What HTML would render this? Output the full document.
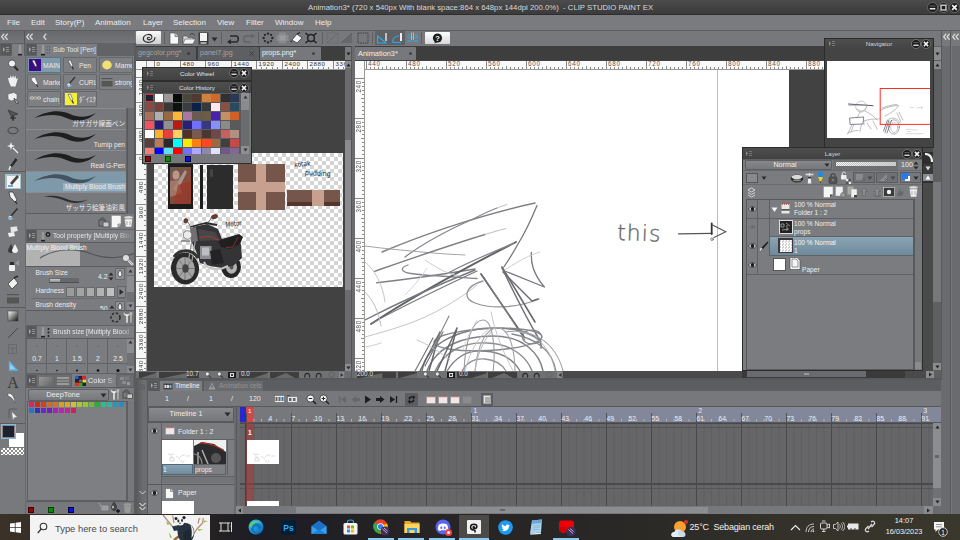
<!DOCTYPE html>
<html><head><meta charset="utf-8"><title>CLIP STUDIO PAINT EX</title>
<style>
html,body{margin:0;padding:0;background:#6f7073;}
body{width:960px;height:540px;overflow:hidden;position:relative;font-family:"Liberation Sans","Noto Sans CJK JP",sans-serif;}
#r{position:absolute;left:0;top:0;width:960px;height:540px;overflow:hidden;}
#r div,#r svg{position:absolute;}
#r svg{overflow:hidden;}
</style></head><body><div id="r">
<div style="left:0px;top:0px;width:960px;height:540px;background:#6f7073;"></div>
<div style="left:0px;top:0px;width:960px;height:15px;background:linear-gradient(#4c4c4c,#444 40%,#3a3a3a);"></div>
<div style="left:0px;top:14px;width:960px;height:1px;background:#2e2e2e;"></div>
<div style="left:308px;top:2px;font-size:7.76px;color:#d8d8d8;white-space:nowrap;line-height:11px;">Animation3* (720 x 540px With blank space:864 x 648px 144dpi 200.0%)&nbsp; - CLIP STUDIO PAINT EX</div>
<svg style="left:926.5px;top:2px;" width="11" height="11" viewBox="0 0 11 11"><circle cx="5.5" cy="5.5" r="5" fill="#1e1e1e" stroke="#8a8a8a" stroke-width="0.6"/><rect x="2.7" y="6" width="5.6" height="1.5" fill="#e8e8e8"/><rect x="2.7" y="3.6" width="5.6" height="0.8" fill="#777"/></svg>
<svg style="left:937.5px;top:2px;" width="11" height="11" viewBox="0 0 11 11"><circle cx="5.5" cy="5.5" r="5" fill="#1e1e1e" stroke="#8a8a8a" stroke-width="0.6"/><rect x="3" y="3.2" width="5" height="4.8" fill="none" stroke="#e8e8e8" stroke-width="1.2"/></svg>
<svg style="left:948.5px;top:2px;" width="11" height="11" viewBox="0 0 11 11"><circle cx="5.5" cy="5.5" r="5" fill="#1e1e1e" stroke="#8a8a8a" stroke-width="0.6"/><path d="M3.2 3.200 L7.800 7.800 M7.800 3.200 L3.200 7.800" stroke="#f0f0f0" stroke-width="1.700"/></svg>
<div style="left:0px;top:15px;width:960px;height:15px;background:#7a7b7e;"></div>
<div style="left:7px;top:17px;font-size:8px;color:#ececec;white-space:nowrap;line-height:11px;">File</div>
<div style="left:31px;top:17px;font-size:8px;color:#ececec;white-space:nowrap;line-height:11px;">Edit</div>
<div style="left:55px;top:17px;font-size:8px;color:#ececec;white-space:nowrap;line-height:11px;">Story(P)</div>
<div style="left:95px;top:17px;font-size:8px;color:#ececec;white-space:nowrap;line-height:11px;">Animation</div>
<div style="left:143px;top:17px;font-size:8px;color:#ececec;white-space:nowrap;line-height:11px;">Layer</div>
<div style="left:173px;top:17px;font-size:8px;color:#ececec;white-space:nowrap;line-height:11px;">Selection</div>
<div style="left:217px;top:17px;font-size:8px;color:#ececec;white-space:nowrap;line-height:11px;">View</div>
<div style="left:246px;top:17px;font-size:8px;color:#ececec;white-space:nowrap;line-height:11px;">Filter</div>
<div style="left:275px;top:17px;font-size:8px;color:#ececec;white-space:nowrap;line-height:11px;">Window</div>
<div style="left:315px;top:17px;font-size:8px;color:#ececec;white-space:nowrap;line-height:11px;">Help</div>
<div style="left:0px;top:30px;width:960px;height:16px;background:#77787b;"></div>
<div style="left:0px;top:30px;width:960px;height:1px;background:#5c5d5f;"></div>
<div style="left:0px;top:31px;width:25px;height:12px;background:linear-gradient(#68696c,#747578);"></div>
<div style="left:25px;top:31px;width:110px;height:12px;background:linear-gradient(#68696c,#747578);"></div>
<svg style="left:1px;top:33px;" width="9" height="8" viewBox="0 0 9 8"><path d="M3.2 0.700 L0.6 3.700 L3.2 6.700 M6.6 0.700 L4.0 3.700 L6.6 6.700" fill="none" stroke="#d6d6d6" stroke-width="1.300"/></svg>
<svg style="left:26px;top:33px;" width="9" height="8" viewBox="0 0 9 8"><path d="M3.2 0.700 L0.6 3.700 L3.2 6.700 M6.6 0.700 L4.0 3.700 L6.6 6.700" fill="none" stroke="#d6d6d6" stroke-width="1.300"/></svg>
<svg style="left:43px;top:33px;" width="9" height="8" viewBox="0 0 9 8"><path d="M3.2 0.700 L0.6 3.700 L3.2 6.700" fill="none" stroke="#d6d6d6" stroke-width="1.300"/></svg>
<div style="left:24px;top:31px;width:1px;height:12px;background:#555;"></div>
<div style="left:0px;top:43px;width:25px;height:471px;background:#78797c;"></div>
<div style="left:0px;top:43px;width:25px;height:13px;background:#5e5f61;"></div>
<div style="left:1px;top:44px;width:10px;height:11px;background:#57585a;"></div>
<div style="left:12px;top:44px;width:12px;height:12px;background:#7d7e81;"></div>
<svg style="left:3px;top:47px;" width="6" height="6" viewBox="0 0 6 6"><path d="M0 0 L2 2.500 L0 5 Z" fill="#aaa"/><path d="M3 0.500 H6 M3 2.500 H6 M3 4.500 H6" stroke="#aaa" stroke-width="0.700"/></svg>
<svg style="left:17px;top:45px;" width="6" height="11" viewBox="0 0 6 11"><path d="M2 0 L4 0 L4.500 8 L1.500 8 Z" fill="#999"/><rect x="1" y="9" width="4" height="1.500" fill="#222"/></svg>
<svg style="left:5px;top:57px;" width="16" height="16" viewBox="0 0 16 16"><circle cx="7" cy="6.5" r="3.6" fill="#f0f0f0" stroke="#555" stroke-width="1"/><path d="M9.5 9.5 L13 13.5" stroke="#2c2c2c" stroke-width="2"/></svg>
<svg style="left:5px;top:73px;" width="16" height="16" viewBox="0 0 16 16"><path d="M4 9 L3 5 L5 5 L5.5 2.5 L7 5 L8 2 L9 5 L10.5 2.5 L11 6 L13 5 L11.5 10 L10.5 13.5 L6 13.5 Z" fill="#f0f0f0"/></svg>
<svg style="left:5px;top:90px;" width="16" height="16" viewBox="0 0 16 16"><path d="M3 4 L9 2.5 L12 4.5 L12 9 L6 11 L3 9 Z" fill="#f0f0f0" stroke="#666" stroke-width="0.6"/><path d="M9 8 L13.5 13 L11 13 Z" fill="#f0f0f0" stroke="#2c2c2c" stroke-width="0.7"/></svg>
<svg style="left:5px;top:107px;" width="16" height="16" viewBox="0 0 16 16"><path d="M3 3 L8 13 L9 8 L13 7 Z" fill="#555" stroke="#2c2c2c" stroke-width="0.6"/><path d="M8 8 L8 14 M5 11 L11 11" stroke="#2c2c2c" stroke-width="1"/></svg>
<svg style="left:5px;top:123px;" width="16" height="16" viewBox="0 0 16 16"><ellipse cx="8" cy="7.5" rx="5" ry="3.2" fill="none" stroke="#4a4a4a" stroke-width="1.1"/></svg>
<svg style="left:5px;top:140px;" width="16" height="16" viewBox="0 0 16 16"><path d="M6 2 L7 5 L10 6 L7 7 L6 10 L5 7 L2 6 L5 5 Z" fill="#f0f0f0"/><path d="M8 8 L13 13" stroke="#f0f0f0" stroke-width="1.3"/></svg>
<svg style="left:5px;top:156px;" width="16" height="16" viewBox="0 0 16 16"><path d="M10.5 2 L12.5 4 L7 11 L5 10 Z" fill="#2c2c2c"/><path d="M5.5 10 L4 14" stroke="#f0f0f0" stroke-width="1.4"/></svg>
<div style="left:0px;top:171px;width:25px;height:1px;background:#5a5b5d;"></div>
<div style="left:5px;top:174px;width:16px;height:15px;background:#a9c2d0;"></div>
<div style="left:6.5px;top:175.5px;width:13px;height:12px;background:#f4f4f4;"></div>
<svg style="left:5px;top:174px;" width="16" height="16" viewBox="0 0 16 16"><path d="M12 1 L14 3 L7 11 L5 9 Z" fill="#444"/><path d="M3 12 L8 12" stroke="#4a90c8" stroke-width="1.5"/></svg>
<svg style="left:5px;top:190px;" width="16" height="16" viewBox="0 0 16 16"><path d="M4 2 L8 2 L12 10 L10 12 L5 7 Z" fill="#f0f0f0" stroke="#2c2c2c" stroke-width="0.7"/><path d="M10 11 L12 14" stroke="#2c2c2c" stroke-width="1.3"/></svg>
<svg style="left:5px;top:207px;" width="16" height="16" viewBox="0 0 16 16"><path d="M12.5 1.5 L5 10" stroke="#2c2c2c" stroke-width="1.4"/><path d="M3 10 L9 12 L4 13 Z" fill="#8cc4e8"/><path d="M3 10 L6 8.5 L7 10.5 Z" fill="#f0f0f0"/></svg>
<svg style="left:5px;top:224px;" width="16" height="16" viewBox="0 0 16 16"><path d="M5 3 L12 2 L13 7 L6 9 Z" fill="#e8e8e8" stroke="#777" stroke-width="0.5"/><path d="M3 9 L9 8 L10 12 L4 13 Z" fill="#f0f0f0"/></svg>
<svg style="left:5px;top:240px;" width="16" height="16" viewBox="0 0 16 16"><path d="M6 4 L9 10 A3 3 0 1 1 3 10 Z" fill="#3a3a3a"/><path d="M10 4 L13 10 A3 3 0 1 1 7 10 Z" fill="#f0f0f0"/></svg>
<svg style="left:5px;top:257px;" width="16" height="16" viewBox="0 0 16 16"><rect x="4" y="8" width="6" height="6" rx="1" fill="#f0f0f0"/><rect x="5" y="5" width="4" height="3" fill="#2c2c2c"/><path d="M10 6 L14 3 L14 9 Z" fill="#999"/></svg>
<svg style="left:5px;top:275px;" width="16" height="16" viewBox="0 0 16 16"><path d="M3 9 L9 3 L13 8 L7 14 Z" fill="#f0f0f0" stroke="#2c2c2c" stroke-width="0.7"/><path d="M9 3 L13 1" stroke="#2c2c2c" stroke-width="1.4"/></svg>
<svg style="left:5px;top:291px;" width="16" height="16" viewBox="0 0 16 16"><rect x="2" y="3" width="12" height="1.2" fill="#555"/><rect x="2" y="6.5" width="12" height="6" fill="#555"/></svg>
<div style="left:0px;top:307px;width:25px;height:1px;background:#5a5b5d;"></div>
<svg style="left:5px;top:308px;" width="16" height="16" viewBox="0 0 16 16"><defs><linearGradient id="gt" x1="0" y1="0" x2="1" y2="1"><stop offset="0" stop-color="#fff"/><stop offset="1" stop-color="#111"/></linearGradient></defs><rect x="3" y="3" width="10" height="10" fill="url(#gt)" stroke="#444" stroke-width="0.6"/></svg>
<svg style="left:5px;top:325px;" width="16" height="16" viewBox="0 0 16 16"><path d="M3 13 L13 3" stroke="#444" stroke-width="1"/></svg>
<svg style="left:5px;top:341px;" width="16" height="16" viewBox="0 0 16 16"><rect x="3.5" y="3.5" width="8" height="9" fill="none" stroke="#696a6c" stroke-width="1"/><path d="M3.5 7 H11.5 M7.5 7 V12.5" stroke="#696a6c" stroke-width="1"/></svg>
<svg style="left:5px;top:358px;" width="16" height="16" viewBox="0 0 16 16"><path d="M4.500 4 L4.500 12 L12 12 Z" fill="#9ad0f0" stroke="#5ab4e6" stroke-width="1.300"/></svg>
<svg style="left:5px;top:374px;" width="16" height="16" viewBox="0 0 16 16"><text x="8" y="14" font-size="16" font-family="Liberation Serif, serif" fill="#3a3a3a" text-anchor="middle">A</text></svg>
<svg style="left:5px;top:390px;" width="16" height="16" viewBox="0 0 16 16"><path d="M3 3 Q9 3 10 13 Q7 7 3 6 Z" fill="#f0f0f0" stroke="#444" stroke-width="0.5"/></svg>
<svg style="left:5px;top:407px;" width="16" height="16" viewBox="0 0 16 16"><path d="M4 2 L12 2 M4 2 L4 11" stroke="#555" stroke-width="0.8"/><path d="M7 5 L12 10 L9 10.5 L8 13 Z" fill="#f0f0f0"/></svg>
<div style="left:0px;top:423px;width:25px;height:1px;background:#5a5b5d;"></div>
<div style="left:9px;top:433px;width:15px;height:14px;background:#ffffff;"></div>
<div style="left:1px;top:424px;width:15px;height:15px;background:#7fc0e4;"></div>
<div style="left:2px;top:425px;width:13px;height:13px;background:#888;"></div>
<div style="left:3px;top:426px;width:11px;height:11px;background:#1d2230;"></div>
<div style="left:1px;top:448px;width:23px;height:7px;background:repeating-conic-gradient(#fff 0% 25%, #8a8a8a 0% 50%) 0 0/4px 4px;"></div>
<div style="left:25px;top:43px;width:110px;height:471px;background:#6a6b6e;"></div>
<div style="left:25px;top:43px;width:1px;height:471px;background:#67686b;"></div>
<div style="left:134px;top:43px;width:2px;height:471px;background:#5a5b5d;"></div>
<div style="left:26px;top:43px;width:108px;height:13px;background:#626366;"></div>
<div style="left:27px;top:44px;width:9px;height:11px;background:#57585a;"></div>
<div style="left:37px;top:44px;width:60px;height:12px;background:#7d7e81;"></div>
<div style="left:53px;top:45px;font-size:6.6px;color:#e4e4e4;white-space:nowrap;line-height:10px;">Sub Tool [Pen]</div>
<svg style="left:39px;top:45px;" width="12" height="11" viewBox="0 0 12 11"><path d="M3 0 L5 0 L5.5 8 L2.5 8 Z" fill="#999"/><rect x="2" y="9" width="4" height="1.5" fill="#222"/><path d="M8 1 V10 M10.5 1 V10" stroke="#555" stroke-width="0.8" stroke-dasharray="1.5 1.5"/></svg>
<svg style="left:29px;top:47px;" width="6" height="6" viewBox="0 0 6 6"><path d="M0 0 L2 2.5 L0 5 Z" fill="#aaa"/><path d="M3 0.5 H6 M3 2.5 H6 M3 4.5 H6" stroke="#aaa" stroke-width="0.7"/></svg>
<div style="left:26px;top:56px;width:108px;height:52px;background:#7b7c7f;"></div>
<div style="left:27px;top:57px;width:34px;height:16px;background:#7f9aab;border:1px solid #5d7484;box-sizing:border-box;border-radius:1px;overflow:hidden;"><svg style="left:1px;top:1px" width="12" height="12" viewBox="0 0 12 12"><rect x="0" y="0" width="12" height="12" fill="#3a0a8c"/><path d="M3 1.5 L5.5 1 L8 7 L6.5 8 Z" fill="#f4f4f4" stroke="#333" stroke-width="0.5"/><path d="M7 7.5 L8.5 10.5" stroke="#333" stroke-width="1.2"/></svg><div style="left:15px;top:3px;font-size:6.8px;line-height:10px;color:#e8e8e8;white-space:nowrap;">MAIN</div></div>
<div style="left:63px;top:57px;width:34px;height:16px;background:#7e7f82;border:1px solid #67686b;box-sizing:border-box;border-radius:1px;overflow:hidden;"><svg style="left:1px;top:1px" width="12" height="12" viewBox="0 0 12 12"><path d="M3 1.5 L5.5 1 L8 7 L6.5 8 Z" fill="#f4f4f4" stroke="#333" stroke-width="0.5"/><path d="M7 7.5 L8.5 10.5" stroke="#333" stroke-width="1.2"/></svg><div style="left:15px;top:3px;font-size:6.8px;line-height:10px;color:#e8e8e8;white-space:nowrap;">Pen</div></div>
<div style="left:99px;top:57px;width:34px;height:16px;background:#7e7f82;border:1px solid #67686b;box-sizing:border-box;border-radius:1px;overflow:hidden;"><svg style="left:1px;top:1px" width="12" height="12" viewBox="0 0 12 12"><ellipse cx="6" cy="6" rx="4.8" ry="4.4" fill="#f2e070"/></svg><div style="left:15px;top:3px;font-size:6.8px;line-height:10px;color:#e8e8e8;white-space:nowrap;">Mame</div></div>
<div style="left:27px;top:74px;width:34px;height:16px;background:#7e7f82;border:1px solid #67686b;box-sizing:border-box;border-radius:1px;overflow:hidden;"><svg style="left:1px;top:1px" width="12" height="12" viewBox="0 0 12 12"><path d="M2 2 L6 1 L9 8 L7 9 L3 5 Z" fill="#f4f4f4" stroke="#444" stroke-width="0.5"/><path d="M7.5 8.5 L9 11" stroke="#333" stroke-width="1.1"/></svg><div style="left:15px;top:3px;font-size:6.8px;line-height:10px;color:#e8e8e8;white-space:nowrap;">Marke</div></div>
<div style="left:63px;top:74px;width:34px;height:16px;background:#7e7f82;border:1px solid #67686b;box-sizing:border-box;border-radius:1px;overflow:hidden;"><svg style="left:1px;top:1px" width="12" height="12" viewBox="0 0 12 12"><path d="M10 1 L4 8" stroke="#333" stroke-width="1.2"/><path d="M2 8 L7 10 L3 11 Z" fill="#9ccff0"/><path d="M2 8.5 L4.5 7 L5 9 Z" fill="#fff"/></svg><div style="left:15px;top:3px;font-size:6.8px;line-height:10px;color:#e8e8e8;white-space:nowrap;">CURL</div></div>
<div style="left:99px;top:74px;width:34px;height:16px;background:#7e7f82;border:1px solid #67686b;box-sizing:border-box;border-radius:1px;overflow:hidden;"><svg style="left:1px;top:1px" width="12" height="12" viewBox="0 0 12 12"><rect x="0.5" y="2" width="11" height="1.2" fill="#555"/><rect x="0.5" y="5" width="11" height="5.5" fill="#555"/></svg><div style="left:15px;top:3px;font-size:6.8px;line-height:10px;color:#e8e8e8;white-space:nowrap;">strong</div></div>
<div style="left:27px;top:91px;width:34px;height:16px;background:#7e7f82;border:1px solid #67686b;box-sizing:border-box;border-radius:1px;overflow:hidden;"><svg style="left:1px;top:1px" width="12" height="12" viewBox="0 0 12 12"><ellipse cx="3" cy="5" rx="2" ry="1.2" fill="none" stroke="#ddd" stroke-width="0.8"/><ellipse cx="6.5" cy="5" rx="2" ry="1.2" fill="none" stroke="#c8c090" stroke-width="0.8"/><ellipse cx="10" cy="5" rx="1.8" ry="1.2" fill="none" stroke="#ddd" stroke-width="0.8"/></svg><div style="left:15px;top:3px;font-size:6.8px;line-height:10px;color:#e8e8e8;white-space:nowrap;">chain_</div></div>
<div style="left:63px;top:91px;width:34px;height:16px;background:#7e7f82;border:1px solid #67686b;box-sizing:border-box;border-radius:1px;overflow:hidden;"><svg style="left:1px;top:1px" width="12" height="12" viewBox="0 0 12 12"><rect x="0" y="0" width="12" height="12" fill="#f6f032"/><path d="M3 1.5 L5.5 1 L8 7 L6.5 8 Z" fill="#f4f4f4" stroke="#333" stroke-width="0.5"/><path d="M7 7.5 L8.5 10.5" stroke="#333" stroke-width="1.2"/></svg><div style="left:15px;top:3px;font-size:6.8px;line-height:10px;color:#e8e8e8;white-space:nowrap;">ﾀﾞｲｴｸ</div></div>
<div style="left:26px;top:108px;width:108px;height:105px;background:#626366;"></div>
<div style="left:26px;top:108px;width:100px;height:20px;background:#78797c;border-top:1px solid #8b8c8f;border-bottom:1px solid #5b5c5e;box-sizing:content-box;"></div>
<svg style="left:30px;top:109px;" width="80" height="13" viewBox="0 0 80 13"><path d="M4 9 C18 1 30 0.500 40 5 C48 9 58 8.500 66 4 C58 11.500 48 13.500 39 10 C30 5.500 20 4 4 9 Z" fill="#1a1a1a" opacity="0.95"/></svg>
<div style="left:26px;top:119px;font-size:6.6px;color:#ececec;white-space:nowrap;line-height:10px;width:99px;text-align:right;">ガサガサ線画ペン</div>
<div style="left:26px;top:129px;width:100px;height:20px;background:#78797c;border-top:1px solid #8b8c8f;border-bottom:1px solid #5b5c5e;box-sizing:content-box;"></div>
<svg style="left:30px;top:130px;" width="80" height="13" viewBox="0 0 80 13"><path d="M4 9 C18 1 30 0.500 40 5 C48 9 58 8.500 66 4 C58 11.500 48 13.500 39 10 C30 5.500 20 4 4 9 Z" fill="#1a1a1a" opacity="0.95"/></svg>
<div style="left:26px;top:140px;font-size:6.6px;color:#ececec;white-space:nowrap;line-height:10px;width:99px;text-align:right;">Turnip pen</div>
<div style="left:26px;top:150px;width:100px;height:20px;background:#78797c;border-top:1px solid #8b8c8f;border-bottom:1px solid #5b5c5e;box-sizing:content-box;"></div>
<svg style="left:30px;top:151px;" width="80" height="13" viewBox="0 0 80 13"><path d="M4 9 C18 1 30 0.500 40 5 C48 9 58 8.500 66 4 C58 11.500 48 13.500 39 10 C30 5.500 20 4 4 9 Z" fill="#1a1a1a" opacity="0.95"/></svg>
<div style="left:26px;top:161px;font-size:6.6px;color:#ececec;white-space:nowrap;line-height:10px;width:99px;text-align:right;">Real G-Pen</div>
<div style="left:26px;top:171px;width:100px;height:20px;background:#7e99aa;border-top:1px solid #8b8c8f;border-bottom:1px solid #5b5c5e;box-sizing:content-box;"></div>
<svg style="left:30px;top:172px;" width="80" height="13" viewBox="0 0 80 13"><path d="M4 9 C18 1 30 0.500 40 5 C48 9 58 8.500 66 4 C58 11.500 48 13.500 39 10 C30 5.500 20 4 4 9 Z" fill="#33424e" opacity="0.8"/></svg>
<div style="left:63px;top:183px;width:63px;height:8px;background:rgba(190,205,215,0.45);"></div>
<div style="left:26px;top:182px;font-size:6.6px;color:#ececec;white-space:nowrap;line-height:10px;width:99px;text-align:right;">Multiply Blood Brush</div>
<div style="left:26px;top:192px;width:100px;height:20px;background:#78797c;border-top:1px solid #8b8c8f;border-bottom:1px solid #5b5c5e;box-sizing:content-box;"></div>
<svg style="left:30px;top:193px;" width="80" height="13" viewBox="0 0 80 13"><path d="M13 4 C22 1.500 30 3 38 6.500 C44 9 52 8.500 58 6.500 C52 10 44 11 37 8.500 C30 5.500 22 3 13 4 Z" fill="#222" opacity="0.85"/></svg>
<div style="left:26px;top:203px;font-size:6.6px;color:#ececec;white-space:nowrap;line-height:10px;width:99px;text-align:right;">ザッサラ絵筆油彩風</div>
<div style="left:127px;top:108px;width:7px;height:106px;background:#6b6c6f;"></div>
<div style="left:127px;top:108px;width:1px;height:106px;background:#58595b;"></div>
<div style="left:26px;top:214px;width:108px;height:15px;background:#7b7c7f;"></div>
<svg style="left:98px;top:216px;" width="12" height="12" viewBox="0 0 12 12"><rect x="1" y="4" width="6" height="6" fill="none" stroke="#4a4a4a" stroke-width="1"/><rect x="5" y="6" width="6" height="5" fill="#ccc" stroke="#4a4a4a" stroke-width="0.8"/><path d="M3 4 V2 H6 V4" fill="none" stroke="#4a4a4a" stroke-width="0.8"/></svg>
<svg style="left:111px;top:215px;" width="11" height="13" viewBox="0 0 11 13"><path d="M0.5 0.5 H10 V9 L7 12.5 H0.5 Z" fill="#f6f6f6" stroke="#888" stroke-width="0.5"/><path d="M10 9 H7 V12.5" fill="#bbb" stroke="#555" stroke-width="0.5"/></svg>
<svg style="left:123px;top:215px;" width="11" height="13" viewBox="0 0 11 13"><ellipse cx="5.5" cy="2.5" rx="4.5" ry="1.8" fill="#ddd" stroke="#666" stroke-width="0.5"/><path d="M1.5 4 L2.5 12 H8.5 L9.5 4 Z" fill="#f4f4f4" stroke="#777" stroke-width="0.5"/><path d="M4 6 V10 M7 6 V10" stroke="#999" stroke-width="0.8"/></svg>
<div style="left:26px;top:229px;width:108px;height:13px;background:#626366;"></div>
<div style="left:27px;top:230px;width:9px;height:11px;background:#57585a;"></div>
<svg style="left:29px;top:233px;" width="6" height="6" viewBox="0 0 6 6"><path d="M0 0 L2 2.5 L0 5 Z" fill="#aaa"/><path d="M3 0.5 H6 M3 2.5 H6 M3 4.5 H6" stroke="#aaa" stroke-width="0.7"/></svg>
<div style="left:37px;top:230px;width:97px;height:12px;background:#7d7e81;"></div>
<svg style="left:39px;top:231px;" width="12" height="11" viewBox="0 0 12 11"><path d="M3 1 L5 1 L5.5 8 L2.5 8 Z" fill="#999"/><rect x="2" y="9" width="4" height="1.5" fill="#222"/><circle cx="9" cy="3.5" r="2.4" fill="#222"/><circle cx="9" cy="3.5" r="0.9" fill="#999"/></svg>
<div style="left:53px;top:231px;width:80px;height:11px;overflow:hidden;-webkit-mask-image:linear-gradient(90deg,#000 80%,transparent);"><div style="font-size:6.7px;line-height:10px;color:#e6e6e6;white-space:nowrap;top:0;left:0">Tool property [Multiply Blood B</div></div>
<div style="left:26px;top:242px;width:108px;height:24px;background:#77787b;"></div>
<div style="left:26px;top:242px;width:54px;height:24px;background:#b2b2b2;"></div>
<div style="left:26px;top:242px;width:108px;height:1px;background:#5b5c5e;"></div>
<svg style="left:26px;top:242px;" width="108" height="24" viewBox="0 0 108 24"><path d="M14 16 C30 6 50 6 66 12 C84 19 98 15 120 8" fill="none" stroke="#4a4c50" stroke-width="1.2" opacity="0.8"/></svg>
<div style="left:26.5px;top:243px;font-size:6.6px;color:#f2f2f2;white-space:nowrap;line-height:9px;">Multiply Blood Brush</div>
<svg style="left:121px;top:253px;" width="13" height="13" viewBox="0 0 13 13"><circle cx="5" cy="5" r="3.6" fill="#ddd" stroke="#555" stroke-width="0.8"/><path d="M7.5 7.5 L12 12" stroke="#eee" stroke-width="2.2"/><path d="M7.5 7.5 L12 12" stroke="#666" stroke-width="0.6"/></svg>
<div style="left:26px;top:266px;width:108px;height:44px;background:#7b7c7f;"></div>
<div style="left:26px;top:266px;width:108px;height:1px;background:#5b5c5e;"></div>
<div style="left:35.5px;top:268px;font-size:6.7px;color:#ececec;white-space:nowrap;line-height:10px;">Brush Size</div>
<div style="left:98px;top:272px;font-size:6.8px;color:#ececec;white-space:nowrap;line-height:10px;">4.2</div>
<svg style="left:108px;top:272px;" width="6" height="9" viewBox="0 0 6 9"><path d="M3 0.5 L5.5 3.5 H0.5 Z M3 8.5 L5.5 5.5 H0.5 Z" fill="#2a2a2a"/></svg>
<div style="left:115px;top:268px;width:10px;height:12px;background:#8e8f92;border:1px solid #66676a;box-sizing:border-box"></div>
<svg style="left:116px;top:269px;" width="8" height="10" viewBox="0 0 8 10"><path d="M4 1 C1.5 4 1.5 7 4 8 C6.5 7 6.5 4 4 1 Z" fill="#f0f0f0" stroke="#333" stroke-width="0.8"/></svg>
<div style="left:49px;top:278px;width:30px;height:4px;background:#68696c;"></div>
<div style="left:50px;top:279px;width:10px;height:3px;background:linear-gradient(#c8c8c8,#909090);"></div>
<div style="left:49px;top:282px;width:30px;height:1px;background:#4c4d4f;"></div>
<div style="left:35.5px;top:286px;font-size:6.7px;color:#ececec;white-space:nowrap;line-height:10px;">Hardness</div>
<div style="left:66px;top:287px;width:9px;height:10px;background:#9a9b9d;border:1px solid #68696b;box-sizing:border-box"></div>
<div style="left:76px;top:287px;width:9px;height:10px;background:#a2a3a5;border:1px solid #68696b;box-sizing:border-box"></div>
<div style="left:86px;top:287px;width:9px;height:10px;background:#aaabad;border:1px solid #68696b;box-sizing:border-box"></div>
<div style="left:96px;top:287px;width:9px;height:10px;background:#b2b3b5;border:1px solid #68696b;box-sizing:border-box"></div>
<div style="left:106px;top:287px;width:9px;height:10px;background:#c0c1c3;border:1px solid #68696b;box-sizing:border-box"></div>
<div style="left:117px;top:286px;width:9px;height:12px;background:#858689;border:1px solid #66676a;box-sizing:border-box"></div>
<svg style="left:119px;top:289px;" width="5" height="6" viewBox="0 0 5 6"><path d="M0.5 0 L4.5 3 L0.5 6 Z" fill="#2a2a2a"/></svg>
<div style="left:31px;top:298px;width:94px;height:1px;background:#6a6b6e;"></div>
<div style="left:35.5px;top:300px;font-size:6.7px;color:#ececec;white-space:nowrap;line-height:10px;">Brush density</div>
<div style="left:100px;top:304px;font-size:6.8px;color:#ececec;white-space:nowrap;line-height:10px;">50</div>
<svg style="left:109px;top:305px;" width="6" height="5" viewBox="0 0 6 5"><path d="M3 0.5 L5.5 3.5 H0.5 Z" fill="#2a2a2a"/></svg>
<div style="left:115px;top:301px;width:10px;height:9px;background:#8e8f92;border:1px solid #66676a;box-sizing:border-box;border-bottom:none"></div>
<svg style="left:116px;top:302px;" width="8" height="8" viewBox="0 0 8 8"><path d="M4 1 C1.5 4 1.5 7 4 8 C6.5 7 6.5 4 4 1 Z" fill="#f0f0f0" stroke="#333" stroke-width="0.8"/></svg>
<div style="left:127px;top:267px;width:7px;height:43px;background:#707174;"></div>
<div style="left:127px;top:267px;width:7px;height:8px;background:#8a8b8e;"></div>
<div style="left:127px;top:276px;width:7px;height:16px;background:#8c8d90;"></div>
<div style="left:127px;top:302px;width:7px;height:8px;background:#8a8b8e;"></div>
<svg style="left:128px;top:269px;" width="5" height="4" viewBox="0 0 5 4"><path d="M2.5 0.5 L4.5 3.5 H0.5 Z" fill="#333"/></svg>
<svg style="left:128px;top:304px;" width="5" height="4" viewBox="0 0 5 4"><path d="M2.5 3.5 L4.5 0.5 H0.5 Z" fill="#333"/></svg>
<div style="left:26px;top:310px;width:108px;height:15px;background:#77787b;"></div>
<div style="left:26px;top:310px;width:108px;height:1px;background:#5b5c5e;"></div>
<svg style="left:109px;top:311px;" width="13" height="13" viewBox="0 0 13 13"><circle cx="6.5" cy="6.5" r="4.5" fill="none" stroke="#2e2e2e" stroke-width="1.6" stroke-dasharray="2.4 1.8"/></svg>
<svg style="left:122px;top:311px;" width="12" height="13" viewBox="0 0 12 13"><path d="M2 1 C1 4 3 5 4 5 V12 H6 V5 C8 5 9 3 8 1 L6.5 3 H3.5 Z" fill="#eee" stroke="#777" stroke-width="0.5"/><path d="M7 1 L11 1 L10 5 V12 H8 V5 Z" fill="#bbb" stroke="#666" stroke-width="0.5"/></svg>
<div style="left:26px;top:325px;width:108px;height:13px;background:#626366;"></div>
<div style="left:27px;top:326px;width:9px;height:11px;background:#57585a;"></div>
<svg style="left:29px;top:329px;" width="6" height="6" viewBox="0 0 6 6"><path d="M0 0 L2 2.5 L0 5 Z" fill="#aaa"/><path d="M3 0.5 H6 M3 2.5 H6 M3 4.5 H6" stroke="#aaa" stroke-width="0.7"/></svg>
<div style="left:37px;top:326px;width:97px;height:12px;background:#7d7e81;"></div>
<svg style="left:39px;top:327px;" width="12" height="11" viewBox="0 0 12 11"><path d="M3 0 L5 0 L5.5 8 L2.5 8 Z" fill="#999"/><rect x="2" y="9" width="4" height="1.5" fill="#222"/><circle cx="9.5" cy="2" r="1" fill="#222"/><circle cx="9.5" cy="5.5" r="1" fill="#222"/><circle cx="9.5" cy="9" r="1" fill="#222"/></svg>
<div style="left:53px;top:327px;width:80px;height:11px;overflow:hidden;-webkit-mask-image:linear-gradient(90deg,#000 85%,transparent);"><div style="font-size:6.7px;line-height:10px;color:#e6e6e6;white-space:nowrap;top:0;left:0">Brush size [Multiply Blood Bru</div></div>
<div style="left:26px;top:338px;width:108px;height:35px;background:#7b7c7f;"></div>
<div style="left:26px;top:338px;width:108px;height:1px;background:#5b5c5e;"></div>
<div style="left:26px;top:339px;width:1px;height:34px;background:#626366;"></div>
<div style="left:26px;top:363px;width:20px;height:1px;background:#626366;"></div>
<div style="left:27px;top:353.5px;font-size:6.8px;color:#ececec;white-space:nowrap;line-height:10px;width:20px;text-align:center;">0.7</div>
<svg style="left:32px;top:343px;" width="10" height="6" viewBox="0 0 10 6"><circle cx="5" cy="3" r="0.400" fill="#333"/></svg>
<svg style="left:32px;top:367px;" width="10" height="6" viewBox="0 0 10 6"><circle cx="5" cy="3.5" r="0.6499999999999999" fill="#111"/></svg>
<div style="left:46px;top:339px;width:1px;height:34px;background:#626366;"></div>
<div style="left:46px;top:363px;width:20px;height:1px;background:#626366;"></div>
<div style="left:47px;top:353.5px;font-size:6.8px;color:#ececec;white-space:nowrap;line-height:10px;width:20px;text-align:center;">1</div>
<svg style="left:52px;top:343px;" width="10" height="6" viewBox="0 0 10 6"><circle cx="5" cy="3" r="0.400" fill="#333"/></svg>
<svg style="left:52px;top:367px;" width="10" height="6" viewBox="0 0 10 6"><circle cx="5" cy="3.5" r="0.8" fill="#111"/></svg>
<div style="left:66px;top:339px;width:1px;height:34px;background:#626366;"></div>
<div style="left:66px;top:363px;width:20px;height:1px;background:#626366;"></div>
<div style="left:67px;top:353.5px;font-size:6.8px;color:#ececec;white-space:nowrap;line-height:10px;width:20px;text-align:center;">1.5</div>
<svg style="left:72px;top:343px;" width="10" height="6" viewBox="0 0 10 6"><circle cx="5" cy="3" r="0.400" fill="#333"/></svg>
<svg style="left:72px;top:367px;" width="10" height="6" viewBox="0 0 10 6"><circle cx="5" cy="3.5" r="1.05" fill="#111"/></svg>
<div style="left:87px;top:339px;width:1px;height:34px;background:#626366;"></div>
<div style="left:87px;top:363px;width:20px;height:1px;background:#626366;"></div>
<div style="left:88px;top:353.5px;font-size:6.8px;color:#ececec;white-space:nowrap;line-height:10px;width:20px;text-align:center;">2</div>
<svg style="left:93px;top:343px;" width="10" height="6" viewBox="0 0 10 6"><circle cx="5" cy="3" r="0.400" fill="#333"/></svg>
<svg style="left:93px;top:367px;" width="10" height="6" viewBox="0 0 10 6"><circle cx="5" cy="3.5" r="1.3" fill="#111"/></svg>
<div style="left:107px;top:339px;width:1px;height:34px;background:#626366;"></div>
<div style="left:107px;top:363px;width:20px;height:1px;background:#626366;"></div>
<div style="left:108px;top:353.5px;font-size:6.8px;color:#ececec;white-space:nowrap;line-height:10px;width:20px;text-align:center;">2.5</div>
<svg style="left:113px;top:343px;" width="10" height="6" viewBox="0 0 10 6"><circle cx="5" cy="3" r="0.400" fill="#333"/></svg>
<svg style="left:113px;top:367px;" width="10" height="6" viewBox="0 0 10 6"><circle cx="5" cy="3.5" r="1.55" fill="#111"/></svg>
<div style="left:127px;top:339px;width:7px;height:34px;background:#707174;"></div>
<div style="left:127px;top:339px;width:7px;height:7px;background:#8a8b8e;"></div>
<div style="left:127px;top:346px;width:7px;height:7px;background:#8c8d90;"></div>
<div style="left:127px;top:366px;width:7px;height:7px;background:#8a8b8e;"></div>
<svg style="left:128px;top:340px;" width="5" height="4" viewBox="0 0 5 4"><path d="M2.5 0.5 L4.5 3.5 H0.5 Z" fill="#333"/></svg>
<svg style="left:128px;top:368px;" width="5" height="4" viewBox="0 0 5 4"><path d="M2.5 3.5 L4.5 0.5 H0.5 Z" fill="#333"/></svg>
<div style="left:26px;top:373px;width:108px;height:15px;background:#626366;"></div>
<div style="left:27px;top:375px;width:9px;height:11px;background:#57585a;"></div>
<svg style="left:29px;top:378px;" width="6" height="6" viewBox="0 0 6 6"><path d="M0 0 L2 2.5 L0 5 Z" fill="#aaa"/><path d="M3 0.5 H6 M3 2.5 H6 M3 4.5 H6" stroke="#aaa" stroke-width="0.7"/></svg>
<div style="left:37px;top:375px;width:17px;height:12px;background:#6c6d70;"></div>
<div style="left:39px;top:377px;width:13px;height:9px;background:linear-gradient(135deg,#999,#666);"></div>
<div style="left:55px;top:375px;width:16px;height:12px;background:#6c6d70;"></div>
<div style="left:57px;top:377px;width:12px;height:2px;background:#9a9a9a;"></div>
<div style="left:57px;top:380px;width:12px;height:2px;background:#888;"></div>
<div style="left:57px;top:383px;width:12px;height:2px;background:#9a9a9a;"></div>
<div style="left:72px;top:374px;width:44px;height:13px;background:#7d7e81;"></div>
<svg style="left:75px;top:376px;" width="11" height="10" viewBox="0 0 11 10"><rect width="11" height="10" fill="#222"/><rect x="0" y="0" width="3.5" height="3" fill="#2060e0"/><rect x="7" y="0" width="4" height="3" fill="#e02040"/><rect x="0" y="6.5" width="4" height="3.5" fill="#e03020"/><rect x="4" y="7" width="3.5" height="3" fill="#20b020"/><rect x="7.5" y="3.5" width="3.5" height="3" fill="#f0e020"/><circle cx="5.5" cy="5" r="1.8" fill="#e83020"/><circle cx="5.5" cy="5" r="0.9" fill="#2070e0"/></svg>
<div style="left:88px;top:376px;width:27px;height:11px;overflow:hidden;-webkit-mask-image:linear-gradient(90deg,#000 70%,transparent);"><div style="font-size:7.4px;line-height:10px;color:#ececec;white-space:nowrap;top:0;left:0">Color Set</div></div>
<div style="left:117px;top:375px;width:16px;height:12px;background:#6c6d70;"></div>
<svg style="left:119px;top:376px;" width="12" height="10" viewBox="0 0 12 10"><rect x="1" y="1" width="4" height="3" fill="#8a8a8a"/><rect x="6" y="0.5" width="4" height="3" fill="#7c7c7c"/><rect x="3" y="5" width="4" height="3" fill="#8a8a8a"/><rect x="8" y="6" width="3" height="3" fill="#999"/></svg>
<div style="left:26px;top:387px;width:108px;height:127px;background:#7b7c7f;"></div>
<div style="left:26px;top:387px;width:108px;height:1px;background:#5b5c5e;"></div>
<div style="left:28px;top:389px;width:81px;height:11.5px;background:linear-gradient(#8a8b8e,#77787b);border:1px solid #5e5f62;box-sizing:border-box;border-radius:2px"></div>
<div style="left:28px;top:389.5px;font-size:7.4px;color:#ececec;white-space:nowrap;line-height:10px;width:70px;text-align:center;">DeepTone</div>
<svg style="left:100px;top:392.5px;" width="7" height="5" viewBox="0 0 7 5"><path d="M0.5 0.5 H6.5 L3.5 4.5 Z" fill="#2a2a2a"/></svg>
<svg style="left:109px;top:388px;" width="12" height="13" viewBox="0 0 12 13"><path d="M2 1 C1 4 3 5 4 5 V12 H6 V5 C8 5 9 3 8 1 L6.5 3 H3.5 Z" fill="#eee" stroke="#777" stroke-width="0.5"/><path d="M7 1 L11 1 L10 5 V12 H8 V5 Z" fill="#bbb" stroke="#666" stroke-width="0.5"/></svg>
<svg style="left:122px;top:389px;" width="11" height="11" viewBox="0 0 11 11"><rect x="1" y="3" width="6" height="6" fill="none" stroke="#4a4a4a" stroke-width="1"/><rect x="5" y="5" width="5.5" height="4.5" fill="#ccc" stroke="#4a4a4a" stroke-width="0.8"/><path d="M3 3 V1 H6 V3" fill="none" stroke="#4a4a4a" stroke-width="0.8"/></svg>
<div style="left:27px;top:401px;width:100px;height:99.5px;background:#7e7f82;border:1px solid #5e5f62;box-sizing:border-box"></div>
<div style="left:28.7px;top:402.3px;width:5.4px;height:5.2px;background:#e0206a;"></div>
<div style="left:34.72px;top:402.3px;width:5.4px;height:5.2px;background:#d8281c;"></div>
<div style="left:40.739999999999995px;top:402.3px;width:5.4px;height:5.2px;background:#e03a1a;"></div>
<div style="left:46.76px;top:402.3px;width:5.4px;height:5.2px;background:#d86828;"></div>
<div style="left:52.78px;top:402.3px;width:5.4px;height:5.2px;background:#d87028;"></div>
<div style="left:58.8px;top:402.3px;width:5.4px;height:5.2px;background:#d8a020;"></div>
<div style="left:64.82px;top:402.3px;width:5.4px;height:5.2px;background:#d8a820;"></div>
<div style="left:70.84px;top:402.3px;width:5.4px;height:5.2px;background:#d0c030;"></div>
<div style="left:76.86px;top:402.3px;width:5.4px;height:5.2px;background:#a8c828;"></div>
<div style="left:82.88px;top:402.3px;width:5.4px;height:5.2px;background:#98c828;"></div>
<div style="left:88.89999999999999px;top:402.3px;width:5.4px;height:5.2px;background:#68c030;"></div>
<div style="left:94.92px;top:402.3px;width:5.4px;height:5.2px;background:#20b828;"></div>
<div style="left:100.94px;top:402.3px;width:5.4px;height:5.2px;background:#28c088;"></div>
<div style="left:106.96px;top:402.3px;width:5.4px;height:5.2px;background:#28b8a0;"></div>
<div style="left:112.98px;top:402.3px;width:5.4px;height:5.2px;background:#2098c8;"></div>
<div style="left:119.0px;top:402.3px;width:5.4px;height:5.2px;background:#2090c8;"></div>
<div style="left:28.7px;top:408.2px;width:5.4px;height:5.2px;background:#2078d0;"></div>
<div style="left:34.72px;top:408.2px;width:5.4px;height:5.2px;background:#3030c8;"></div>
<div style="left:40.739999999999995px;top:408.2px;width:5.4px;height:5.2px;background:#6828c8;"></div>
<div style="left:46.76px;top:408.2px;width:5.4px;height:5.2px;background:#7020c0;"></div>
<div style="left:52.78px;top:408.2px;width:5.4px;height:5.2px;background:#a820c0;"></div>
<div style="left:58.8px;top:408.2px;width:5.4px;height:5.2px;background:#c020b8;"></div>
<div style="left:64.82px;top:408.2px;width:5.4px;height:5.2px;background:#c820a0;"></div>
<div style="left:70.84px;top:408.2px;width:5.4px;height:5.2px;background:#d02060;"></div>
<div style="left:127px;top:401px;width:7px;height:100px;background:#77787b;"></div>
<div style="left:127px;top:401px;width:1px;height:100px;background:#5e5f62;"></div>
<div style="left:26px;top:501px;width:108px;height:13px;background:#77787b;"></div>
<div style="left:26px;top:501px;width:108px;height:1px;background:#5b5c5e;"></div>
<div style="left:28px;top:507px;width:4px;height:4px;background:#8a0a0a;border:0.5px solid #400"></div>
<div style="left:48px;top:507px;width:4px;height:4px;background:#0a8a0a;border:0.5px solid #040"></div>
<div style="left:68px;top:507px;width:4px;height:4px;background:#1010e0;border:0.5px solid #004"></div>
<svg style="left:97px;top:501px;" width="12" height="13" viewBox="0 0 12 13"><path d="M1 2 L3 3 L5 9 H11 L11 5 H4" fill="none" stroke="#9a9a9a" stroke-width="1"/><path d="M5 5 H11 V9 H5 Z" fill="#aaa" opacity="0.7"/></svg>
<svg style="left:109px;top:501px;" width="12" height="13" viewBox="0 0 12 13"><path d="M5 1 C2 5 1.5 8 5 10 C8.5 8 8 5 5 1 Z" fill="#444" stroke="#222" stroke-width="0.5"/><ellipse cx="4" cy="6" rx="1" ry="1.6" fill="#bbb"/><path d="M9 8 V12 M7 10 H11" stroke="#111" stroke-width="1.3"/></svg>
<svg style="left:122px;top:502px;" width="11" height="12" viewBox="0 0 11 12"><ellipse cx="5.5" cy="2.5" rx="4" ry="1.6" fill="#999" /><path d="M2 4 L3 11 H8 L9 4 Z" fill="#9a9a9a" stroke="#888" stroke-width="0.5"/></svg>
<div style="left:136px;top:31px;width:25px;height:13px;background:linear-gradient(#fafafa,#cfcfcf);border-radius:1px"></div>
<svg style="left:141px;top:32px;" width="16" height="12" viewBox="0 0 16 12"><path d="M8.500 5.600 C7 4.600 5.500 6.200 6.800 7.300 C8.500 8.600 11.600 7 10.800 4.400 C10 1.800 4.500 1.600 2.800 4.800 C1 8.400 4.500 10.800 8.500 10.300 C11.500 9.900 13.800 8 14 5.500" fill="none" stroke="#2a2a2a" stroke-width="1.100" stroke-linecap="round"/></svg>
<div style="left:164px;top:32px;width:1px;height:12px;background:#5e5f62;"></div>
<div style="left:221px;top:32px;width:1px;height:12px;background:#5e5f62;"></div>
<div style="left:258px;top:32px;width:1px;height:12px;background:#5e5f62;"></div>
<div style="left:322px;top:32px;width:1px;height:12px;background:#5e5f62;"></div>
<div style="left:372px;top:32px;width:1px;height:12px;background:#5e5f62;"></div>
<div style="left:421px;top:32px;width:1px;height:12px;background:#5e5f62;"></div>
<svg style="left:169px;top:32px;" width="11" height="13" viewBox="0 0 11 13"><path d="M1 1 H6 L9.5 4.5 V12 H1 Z" fill="#f6f6f6" stroke="#4a4a4a" stroke-width="0.6"/><path d="M6 1 V4.5 H9.5" fill="#ccc" stroke="#4a4a4a" stroke-width="0.6"/></svg>
<svg style="left:182px;top:32px;" width="14" height="13" viewBox="0 0 14 13"><path d="M1 12 V4 H5 L6 5.5 H11 V12 Z" fill="#d8d8d8" stroke="#4a4a4a" stroke-width="0.6"/><path d="M1 12 L3 7 H13.5 L11 12 Z" fill="#f4f4f4" stroke="#4a4a4a" stroke-width="0.6"/><path d="M8 3 C9 1 12 1 12.5 3.5" fill="none" stroke="#333" stroke-width="0.9"/></svg>
<svg style="left:198px;top:32px;" width="11" height="13" viewBox="0 0 11 13"><rect x="0.5" y="0.5" width="10" height="12" fill="#3a3a3a"/><rect x="2" y="1" width="7" height="8" fill="#f4f4f4"/><rect x="2.5" y="10" width="6" height="2" fill="#aaa"/></svg>
<svg style="left:211px;top:37px;" width="7" height="5" viewBox="0 0 7 5"><path d="M0.5 0.5 H6.5 L3.5 4.5 Z" fill="#2a2a2a"/></svg>
<svg style="left:226px;top:33px;" width="14" height="11" viewBox="0 0 14 11"><path d="M4 3 H10 C13 3 13 9 10 9 H3" fill="none" stroke="#2a2a2a" stroke-width="1.5"/><path d="M5 6 L1 9 L5 11.5 Z" fill="#2a2a2a"/></svg>
<svg style="left:242px;top:33px;" width="14" height="11" viewBox="0 0 14 11"><path d="M10 3 H4 C1 3 1 9 4 9 H9" fill="none" stroke="#636466" stroke-width="1.5" transform="translate(0,0)"/><path d="M9 0.5 L13 3 L9 5.5 Z" fill="#636466"/></svg>
<svg style="left:262px;top:32px;" width="12" height="12" viewBox="0 0 12 12"><g fill="#2a2a2a"><circle cx="6" cy="1.6" r="1.2"/><circle cx="6" cy="10.4" r="1.2"/><circle cx="1.6" cy="6" r="1.2"/><circle cx="10.4" cy="6" r="1.2"/><circle cx="2.9" cy="2.9" r="1.1"/><circle cx="9.1" cy="9.1" r="1.1"/><circle cx="2.9" cy="9.1" r="1.1"/><circle cx="9.1" cy="2.9" r="1.1"/></g></svg>
<svg style="left:276px;top:32px;" width="13" height="12" viewBox="0 0 13 12"><rect x="3" y="0.5" width="7" height="11" fill="#8a8b8e"/><rect x="0.5" y="3" width="12" height="6" fill="#8a8b8e"/><rect x="3.5" y="3.5" width="6" height="5" fill="#9a9b9e"/></svg>
<svg style="left:290px;top:32px;" width="13" height="12" viewBox="0 0 13 12"><path d="M2 8 L7 2 L12 6 L7 11 Z" fill="#f4f4f4" stroke="#2a2a2a" stroke-width="0.7"/><path d="M7 2 L10 0.5" stroke="#2a2a2a" stroke-width="1.2"/><path d="M1 8 C0 10 1 11 2 10 Z" fill="#222"/></svg>
<svg style="left:304px;top:32px;" width="14" height="12" viewBox="0 0 14 12"><circle cx="7" cy="6" r="3.4" fill="none" stroke="#222" stroke-width="1.5"/><path d="M1.5 1 L4.5 3.5 M12.5 1 L9.5 3.5 M1.5 11 L4.5 8.5 M12.5 11 L9.5 8.5" stroke="#222" stroke-width="1.6"/></svg>
<svg style="left:326px;top:32px;" width="13" height="12" viewBox="0 0 13 12"><rect x="1" y="1" width="11" height="10" fill="none" stroke="#636466" stroke-width="0.8" stroke-dasharray="1.5 1"/><path d="M1 11 L12 1" stroke="#636466" stroke-width="0.8"/></svg>
<svg style="left:340px;top:32px;" width="13" height="12" viewBox="0 0 13 12"><path d="M12 1 V11 H1 Z" fill="#67686b"/><path d="M1 11 L12 1" stroke="#5a5b5e" stroke-width="0.8"/></svg>
<svg style="left:357px;top:32px;" width="12" height="12" viewBox="0 0 12 12"><rect x="1" y="1" width="10" height="10" fill="#77787b" stroke="#3a3a3a" stroke-width="1" stroke-dasharray="1.4 1"/></svg>
<div style="left:375px;top:31px;width:15px;height:14px;background:#606164;"></div>
<div style="left:390px;top:31px;width:15px;height:14px;background:#606164;"></div>
<svg style="left:376px;top:32px;" width="13" height="12" viewBox="0 0 13 12"><path d="M1.5 4 V11 H10 Z" fill="none" stroke="#30a8e8" stroke-width="1.2"/><path d="M10 1 V9" stroke="#eee" stroke-width="2"/><path d="M10 1 V9" stroke="#333" stroke-width="0.5"/></svg>
<svg style="left:391px;top:32px;" width="13" height="12" viewBox="0 0 13 12"><path d="M1.5 10 C2 5 5 4 8 4 M1.5 10.5 H10" fill="none" stroke="#30a8e8" stroke-width="1.2"/><path d="M10 1 V9" stroke="#eee" stroke-width="2"/></svg>
<svg style="left:406px;top:32px;" width="13" height="12" viewBox="0 0 13 12"><path d="M1 5 H12 M1 9 H12 M3 2 V11 M10 2 V11" fill="none" stroke="#30a8e8" stroke-width="1" stroke-dasharray="2 1"/><path d="M6.5 0.5 V8" stroke="#eee" stroke-width="2"/><path d="M6.5 0.5 V8" stroke="#333" stroke-width="0.6"/></svg>
<div style="left:425px;top:32px;width:25px;height:12px;background:linear-gradient(#ffffff,#d8d8d8);border-radius:1px"></div>
<svg style="left:432px;top:33px;" width="11" height="11" viewBox="0 0 11 11"><circle cx="5.5" cy="5" r="4.6" fill="#1e1e1e"/><path d="M3 8 L2.5 10.5 L5.5 9 Z" fill="#1e1e1e"/><text x="5.5" y="7.8" font-size="7.5" font-weight="bold" font-family="Liberation Sans, sans-serif" fill="#fff" text-anchor="middle">?</text></svg>
<div style="left:905px;top:31px;width:36px;height:15px;background:#77787b;"></div>
<div style="left:941px;top:31px;width:1px;height:483px;background:#5a5b5d;"></div>
<div style="left:950px;top:31px;width:1px;height:483px;background:#5a5b5d;"></div>
<div style="left:136px;top:46px;width:769px;height:332px;background:#424242;"></div>
<div style="left:136px;top:46px;width:215px;height:14px;background:#3e3e3e;"></div>
<div style="left:136px;top:47px;width:60px;height:13px;background:#5e5f62;overflow:hidden;border-radius:1px 1px 0 0;"><div style="left:2px;top:1px;font-size:7.1px;line-height:11px;color:#a2a3a5;white-space:nowrap">gegcolor.png*</div></div>
<div style="left:187px;top:52px;width:3px;height:3px;background:#3c3c3c;border-radius:2px"></div>
<div style="left:198px;top:47px;width:60.5px;height:13px;background:#5e5f62;overflow:hidden;border-radius:1px 1px 0 0;"><div style="left:2px;top:1px;font-size:7.1px;line-height:11px;color:#a2a3a5;white-space:nowrap">panel7.jpg</div></div>
<svg style="left:248.5px;top:51px;" width="5" height="5" viewBox="0 0 5 5"><path d="M0.5 0.5 L4.5 4.5 M4.5 0.5 L0.5 4.5" stroke="#3c3c3c" stroke-width="1"/></svg>
<div style="left:260px;top:47px;width:61px;height:13px;background:#77787b;overflow:hidden;border-radius:1px 1px 0 0;"><div style="left:2px;top:1px;font-size:7.1px;line-height:11px;color:#f0f0f0;white-space:nowrap">props.png*</div></div>
<div style="left:312px;top:52px;width:3px;height:3px;background:#444;border-radius:2px"></div>
<div style="left:345px;top:47px;width:6px;height:13px;background:#77787b;"></div>
<svg style="left:346px;top:52px;" width="5" height="4" viewBox="0 0 5 4"><path d="M0.5 0.5 H4.5 L2.5 3.5 Z" fill="#222"/></svg>
<div style="left:136px;top:61px;width:209px;height:8px;background:#f6f6f6;"></div>
<div style="left:136px;top:69px;width:209px;height:1px;background:#999;"></div>
<div style="left:156.5px;top:60px;font-size:6.2px;color:#333;white-space:nowrap;line-height:8px;letter-spacing:0.6px">0</div>
<div style="left:182.5px;top:60px;font-size:6.2px;color:#333;white-space:nowrap;line-height:8px;letter-spacing:0.6px">480</div>
<div style="left:207.5px;top:60px;font-size:6.2px;color:#333;white-space:nowrap;line-height:8px;letter-spacing:0.6px">960</div>
<div style="left:233.5px;top:60px;font-size:6.2px;color:#333;white-space:nowrap;line-height:8px;letter-spacing:0.6px">1440</div>
<div style="left:258.5px;top:60px;font-size:6.2px;color:#333;white-space:nowrap;line-height:8px;letter-spacing:0.6px">1920</div>
<div style="left:284.5px;top:60px;font-size:6.2px;color:#333;white-space:nowrap;line-height:8px;letter-spacing:0.6px">2400</div>
<div style="left:309.5px;top:60px;font-size:6.2px;color:#333;white-space:nowrap;line-height:8px;letter-spacing:0.6px">2880</div>
<div style="left:335.5px;top:60px;font-size:6.2px;color:#333;white-space:nowrap;line-height:8px;letter-spacing:0.6px">3360</div>
<svg style="left:136px;top:61px;" width="209" height="8" viewBox="0 0 209 8"><path d="M18.5 0 v8 M23.5 6 v2 M28.5 6 v2 M34.5 6 v2 M39.5 6 v2 M44.5 0 v8 M49.5 6 v2 M54.5 6 v2 M59.5 6 v2 M64.5 6 v2 M69.5 0 v8 M74.5 6 v2 M80.5 6 v2 M85.5 6 v2 M90.5 6 v2 M95.5 0 v8 M100.5 6 v2 M105.5 6 v2 M110.5 6 v2 M115.5 6 v2 M120.5 0 v8 M125.5 6 v2 M130.5 6 v2 M136.5 6 v2 M141.5 6 v2 M146.5 0 v8 M151.5 6 v2 M156.5 6 v2 M161.5 6 v2 M166.5 6 v2 M171.5 0 v8 M176.5 6 v2 M182.5 6 v2 M187.5 6 v2 M192.5 6 v2 M197.5 0 v8 M202.5 6 v2 M207.5 6 v2 M212.5 6 v2 M217.5 6 v2 M10.5 0 v8 " stroke="#8a8a8a" stroke-width="1" fill="none" shape-rendering="crispEdges"/></svg>
<div style="left:345px;top:61px;width:6px;height:317px;background:#6a6b6e;"></div>
<div style="left:345px;top:61px;width:6px;height:7px;background:#8a8b8e;"></div>
<svg style="left:346px;top:63px;" width="5" height="4" viewBox="0 0 5 4"><path d="M2.5 0.5 L4.5 3.5 H0.5 Z" fill="#222"/></svg>
<div style="left:345px;top:140px;width:6px;height:150px;background:#8a8b8e;"></div>
<div style="left:345px;top:364px;width:6px;height:7px;background:#8a8b8e;"></div>
<svg style="left:346px;top:366px;" width="5" height="4" viewBox="0 0 5 4"><path d="M2.5 3.5 L4.5 0.5 H0.5 Z" fill="#222"/></svg>
<div style="left:136px;top:69px;width:10px;height:302px;background:#f6f6f6;"></div>
<div style="left:146px;top:69px;width:1px;height:302px;background:#999;"></div>
<div style="left:137px;top:79px;font-size:6.2px;line-height:8px;width:8px;color:#333;white-space:nowrap;writing-mode:vertical-rl;transform:rotate(180deg);letter-spacing:0.6px">1440</div>
<div style="left:137px;top:104px;font-size:6.2px;line-height:8px;width:8px;color:#333;white-space:nowrap;writing-mode:vertical-rl;transform:rotate(180deg);letter-spacing:0.6px">960</div>
<div style="left:137px;top:130px;font-size:6.2px;line-height:8px;width:8px;color:#333;white-space:nowrap;writing-mode:vertical-rl;transform:rotate(180deg);letter-spacing:0.6px">480</div>
<div style="left:137px;top:156px;font-size:6.2px;line-height:8px;width:8px;color:#333;white-space:nowrap;writing-mode:vertical-rl;transform:rotate(180deg);letter-spacing:0.6px">0</div>
<div style="left:137px;top:181px;font-size:6.2px;line-height:8px;width:8px;color:#333;white-space:nowrap;writing-mode:vertical-rl;transform:rotate(180deg);letter-spacing:0.6px">480</div>
<div style="left:137px;top:206px;font-size:6.2px;line-height:8px;width:8px;color:#333;white-space:nowrap;writing-mode:vertical-rl;transform:rotate(180deg);letter-spacing:0.6px">960</div>
<div style="left:137px;top:232px;font-size:6.2px;line-height:8px;width:8px;color:#333;white-space:nowrap;writing-mode:vertical-rl;transform:rotate(180deg);letter-spacing:0.6px">1440</div>
<div style="left:137px;top:258px;font-size:6.2px;line-height:8px;width:8px;color:#333;white-space:nowrap;writing-mode:vertical-rl;transform:rotate(180deg);letter-spacing:0.6px">1920</div>
<div style="left:137px;top:283px;font-size:6.2px;line-height:8px;width:8px;color:#333;white-space:nowrap;writing-mode:vertical-rl;transform:rotate(180deg);letter-spacing:0.6px">2400</div>
<div style="left:137px;top:308px;font-size:6.2px;line-height:8px;width:8px;color:#333;white-space:nowrap;writing-mode:vertical-rl;transform:rotate(180deg);letter-spacing:0.6px">2880</div>
<div style="left:137px;top:334px;font-size:6.2px;line-height:8px;width:8px;color:#333;white-space:nowrap;writing-mode:vertical-rl;transform:rotate(180deg);letter-spacing:0.6px">3360</div>
<div style="left:137px;top:360px;font-size:6.2px;line-height:8px;width:8px;color:#333;white-space:nowrap;writing-mode:vertical-rl;transform:rotate(180deg);letter-spacing:0.6px">3840</div>
<svg style="left:136px;top:69px;" width="10" height="302" viewBox="0 0 10 302"><path d="M0 8.5 h10 M8 13.5 h2 M8 18.5 h2 M8 23.5 h2 M8 28.5 h2 M0 33.5 h10 M8 39.5 h2 M8 44.5 h2 M8 49.5 h2 M8 54.5 h2 M0 59.5 h10 M8 64.5 h2 M8 69.5 h2 M8 74.5 h2 M8 79.5 h2 M0 85.5 h10 M8 90.5 h2 M8 95.5 h2 M8 100.5 h2 M8 105.5 h2 M0 110.5 h10 M8 115.5 h2 M8 120.5 h2 M8 125.5 h2 M8 130.5 h2 M0 135.5 h10 M8 141.5 h2 M8 146.5 h2 M8 151.5 h2 M8 156.5 h2 M0 161.5 h10 M8 166.5 h2 M8 171.5 h2 M8 176.5 h2 M8 181.5 h2 M0 187.5 h10 M8 192.5 h2 M8 197.5 h2 M8 202.5 h2 M8 207.5 h2 M0 212.5 h10 M8 217.5 h2 M8 222.5 h2 M8 227.5 h2 M8 232.5 h2 M0 237.5 h10 M8 243.5 h2 M8 248.5 h2 M8 253.5 h2 M8 258.5 h2 M0 263.5 h10 M8 268.5 h2 M8 273.5 h2 M8 278.5 h2 M8 283.5 h2 M0 289.5 h10 M8 294.5 h2 M8 299.5 h2 " stroke="#8a8a8a" stroke-width="1" fill="none" shape-rendering="crispEdges"/></svg>
<div style="left:136px;top:61px;width:10px;height:8px;background:#f6f6f6;"></div>
<div style="left:146px;top:61px;width:1px;height:9px;background:#999;"></div>
<div style="left:136px;top:69px;width:10px;height:1px;background:#999;"></div>
<div style="left:154px;top:153px;width:189px;height:134px;background:repeating-conic-gradient(#ffffff 0% 25%, #d4d4d4 0% 50%) 0 0/8px 8px;"></div>
<div style="left:168px;top:164px;width:25px;height:45px;background:#1c1c1c;"></div>
<div style="left:170px;top:167px;width:21px;height:37px;background:linear-gradient(135deg,#6a5a54,#8a4a3c 55%,#5a4a44);"></div>
<svg style="left:170px;top:167px;" width="21" height="37" viewBox="0 0 21 37"><ellipse cx="6" cy="8" rx="3.500" ry="4.500" fill="#b89888"/><path d="M3 22 L15 3 L17 5 L7 25 Z" fill="#b0a8a0" opacity="0.800"/><path d="M0 14 L8 13 L12 26 L0 30 Z" fill="#a88070" opacity="0.800"/><path d="M8 18 L21 14 V37 H4 Z" fill="#a03828" opacity="0.700"/></svg>
<div style="left:200px;top:165px;width:3px;height:44px;background:#1e1e1e;"></div>
<div style="left:207px;top:165px;width:26px;height:44px;background:#2c2c2c;"></div>
<div style="left:210px;top:169px;width:3px;height:8px;background:#444;border-radius:1px"></div>
<div style="left:238px;top:164px;width:47px;height:46px;background:#76564a;"></div>
<div style="left:238px;top:182px;width:47px;height:10px;background:#c8a090;"></div>
<div style="left:256px;top:164px;width:10px;height:46px;background:#c8a090;"></div>
<div style="left:287px;top:190px;width:53px;height:16px;background:#76564a;"></div>
<div style="left:287px;top:202px;width:53px;height:4px;background:#54342c;"></div>
<div style="left:312px;top:190px;width:12px;height:16px;background:#c8a090;"></div>
<div style="left:294px;top:161px;font-family:'DejaVu Sans','Liberation Sans',sans-serif;font-size:7px;line-height:9px;color:#2a2a2a;white-space:nowrap;transform-origin:0 0;transform:rotate(-4deg) scaleX(0.85)">kotak</div>
<div style="left:305px;top:168px;font-family:'DejaVu Sans','Liberation Sans',sans-serif;font-size:7.5px;line-height:10px;color:#2a2a2a;white-space:nowrap;transform-origin:0 0;transform:rotate(3deg) scaleX(0.85)">pudding</div>
<div style="left:225px;top:220px;font-family:'DejaVu Sans','Liberation Sans',sans-serif;font-size:7px;line-height:10px;color:#1a1a1a;white-space:nowrap;transform-origin:0 0;transform:rotate(-6deg) scaleX(0.8)">Motor</div>
<svg style="left:160px;top:205px;" width="100" height="90" viewBox="0 0 100 90">
<g>
<ellipse cx="71" cy="61.700" rx="10" ry="11.300" fill="#262626"/><ellipse cx="71.500" cy="62" rx="5.500" ry="6.800" fill="#b4b4b4"/><ellipse cx="71.500" cy="62" rx="2" ry="2.500" fill="#555"/>
<ellipse cx="25" cy="63.500" rx="14" ry="16" fill="#2a2a2a" transform="rotate(-8 25 63.500)"/><ellipse cx="25.500" cy="63.500" rx="9.300" ry="11.500" fill="#a4a4a4" transform="rotate(-8 25 63.500)"/>
<path d="M25 52 V75 M16.500 63.500 H34.500 M19 55 L32 72 M32 55 L19 72" stroke="#666" stroke-width="0.700"/><ellipse cx="25.500" cy="63.500" rx="3.200" ry="4.200" fill="#444"/>
<path d="M33 22 L47 19 L58 24 L62 34 L78 30 L81 40 L82 53 L73 61 L62 63 L50 61 L40 58 L36 46 L31 36 Z" fill="#343436"/>
<path d="M38 24 L55 27 L60 35 L40 36 Z" fill="#47474b"/>
<path d="M39 33 C46 30.500 52 31 56 34.500 L61 35.500" fill="none" stroke="#c83020" stroke-width="0.900"/>
<path d="M58 36 L66 33 L79 29 L83 32 L80 39 L70 44 L61 42 Z" fill="#202022"/>
<path d="M66 42.500 L73 42 L78 32" fill="none" stroke="#b83020" stroke-width="0.700"/>
<rect x="40" y="41" width="11.500" height="13" fill="#8c8e92"/><rect x="42" y="42.500" width="7" height="8" fill="#bcbec2"/>
<path d="M50 46 L60 44 L64 58 L52 60 Z" fill="#232325"/>
<path d="M44 57 C47 64 52 64.500 62 63.500 L68 61" fill="none" stroke="#c4c4c4" stroke-width="2"/>
<path d="M33 30 L28 58 M36 31 L32 56" stroke="#9a9a9a" stroke-width="1.300"/>
<path d="M14 52 C19 44 32 43 38 53" fill="none" stroke="#333" stroke-width="3.200"/>
<path d="M30 23 L36 22 L38 36 L31 37 Z" fill="#707072"/>
<circle cx="27.500" cy="30" r="4.300" fill="#ececec" stroke="#666" stroke-width="0.800"/>
<path d="M30 22 L46 18 L57 20" fill="none" stroke="#2a2a2a" stroke-width="1.800"/>
<path d="M31 22 L27 16 M47 18.500 L52 12.500" stroke="#555" stroke-width="0.800"/>
<ellipse cx="25.800" cy="15.800" rx="2" ry="2.300" fill="#7a3a2a" stroke="#222" stroke-width="0.500"/>
<ellipse cx="54.500" cy="11.700" rx="3.200" ry="2" fill="#7a3a2a" stroke="#222" stroke-width="0.500" transform="rotate(-15 54.500 11.700)"/>
<path d="M21 36 L30 36" stroke="#444" stroke-width="1"/>
</g></svg>
<div style="left:136px;top:371px;width:209px;height:7px;background:#707174;"></div>
<div style="left:139px;top:371.5px;width:17px;height:6.5px;background:#3e3e3e;"></div>
<svg style="left:139px;top:371.5px;" width="17" height="6.5" viewBox="0 0 17 6.5"><path d="M0.0 6.500 L17.0 1 L17.0 6.500 Z" fill="#686868"/></svg>
<div style="left:159px;top:371.5px;width:40px;height:6.5px;background:#3e3e3e;"></div>
<svg style="left:159px;top:371.5px;" width="40" height="6.5" viewBox="0 0 40 6.5"><path d="M2.0 6.500 L28.0 1 L28.0 6.500 Z" fill="#686868"/></svg>
<div style="left:239px;top:371.5px;width:29px;height:6.5px;background:#3e3e3e;"></div>
<svg style="left:239px;top:371.5px;" width="29" height="6.5" viewBox="0 0 29 6.5"><path d="M13.1 6.500 L29.0 1 L29.0 6.500 Z" fill="#686868"/></svg>
<div style="left:270px;top:371.5px;width:29px;height:6.5px;background:#3e3e3e;"></div>
<svg style="left:270px;top:371.5px;" width="29" height="6.5" viewBox="0 0 29 6.5"><path d="M2.9 6.500 L16.0 1 L16.0 6.500 Z" fill="#686868"/></svg>
<div style="left:186px;top:370px;font-size:6.4px;color:#e0e0e0;white-space:nowrap;line-height:8px;">10.7</div>
<div style="left:241px;top:370px;font-size:6.4px;color:#e0e0e0;white-space:nowrap;line-height:8px;">0.0</div>
<svg style="left:270px;top:371.5px;" width="29" height="6.5" viewBox="0 0 29 6.5"><path d="M16 1 L26 6.500 H16 Z" fill="#686868"/></svg>
<div style="left:227.5px;top:371.5px;width:8px;height:6.5px;background:#1c1c1c;"></div>
<div style="left:229.5px;top:373px;width:4px;height:3.5px;background:#3a3a3a;border:0.600px solid #ddd;box-sizing:border-box"></div>
<svg style="left:204px;top:371px;" width="8" height="7" viewBox="0 0 8 7"><circle cx="3.300" cy="3" r="2" fill="#e8e8e8" stroke="#444" stroke-width="0.600"/><path d="M4.800 4.600 L7 6.800" stroke="#333" stroke-width="1.100"/></svg>
<svg style="left:216px;top:371px;" width="8" height="7" viewBox="0 0 8 7"><circle cx="3.300" cy="3" r="2" fill="#e8e8e8" stroke="#444" stroke-width="0.600"/><path d="M4.800 4.600 L7 6.800" stroke="#333" stroke-width="1.100"/></svg>
<svg style="left:303px;top:371px;" width="36" height="7" viewBox="0 0 36 7"><path d="M2 6.500 C0.500 1 8 1 6.500 6.500 M13.500 6.500 C12 1 19.500 1 18 6.500" fill="none" stroke="#2a2a2a" stroke-width="1.200"/><circle cx="28.500" cy="3.500" r="2.600" fill="none" stroke="#555" stroke-width="0.900" stroke-dasharray="1 0.800"/></svg>
<div style="left:339px;top:371.5px;width:5px;height:6.5px;background:#8a8b8e;"></div>
<svg style="left:340px;top:373px;" width="4" height="4" viewBox="0 0 4 4"><path d="M0.500 0 L3.500 2 L0.500 4 Z" fill="#333"/></svg>
<div style="left:351px;top:46px;width:4px;height:332px;background:#6a6b6e;"></div>
<div style="left:351px;top:46px;width:1px;height:332px;background:#555;"></div>
<div style="left:355px;top:46px;width:550px;height:14px;background:#3e3e3e;"></div>
<div style="left:355px;top:47px;width:61px;height:13px;background:#77787b;overflow:hidden;border-radius:1px 1px 0 0;"><div style="left:3px;top:1px;font-size:7.4px;line-height:11px;color:#f0f0f0;white-space:nowrap">Animation3*</div></div>
<div style="left:409px;top:52px;width:3px;height:3px;background:#444;border-radius:2px"></div>
<div style="left:355px;top:61px;width:550px;height:8px;background:#fafafa;"></div>
<div style="left:355px;top:69px;width:550px;height:1px;background:#999;"></div>
<div style="left:355px;top:61px;width:9px;height:310px;background:#fafafa;"></div>
<div style="left:364px;top:61px;width:1px;height:310px;background:#999;"></div>
<div style="left:368px;top:60px;font-size:6.3px;color:#555;white-space:nowrap;line-height:8px;letter-spacing:0.7px">440</div>
<div style="left:408px;top:60px;font-size:6.3px;color:#555;white-space:nowrap;line-height:8px;letter-spacing:0.7px">480</div>
<div style="left:448px;top:60px;font-size:6.3px;color:#555;white-space:nowrap;line-height:8px;letter-spacing:0.7px">520</div>
<div style="left:488px;top:60px;font-size:6.3px;color:#555;white-space:nowrap;line-height:8px;letter-spacing:0.7px">560</div>
<div style="left:528px;top:60px;font-size:6.3px;color:#555;white-space:nowrap;line-height:8px;letter-spacing:0.7px">600</div>
<div style="left:568px;top:60px;font-size:6.3px;color:#555;white-space:nowrap;line-height:8px;letter-spacing:0.7px">640</div>
<div style="left:608px;top:60px;font-size:6.3px;color:#555;white-space:nowrap;line-height:8px;letter-spacing:0.7px">680</div>
<div style="left:648px;top:60px;font-size:6.3px;color:#555;white-space:nowrap;line-height:8px;letter-spacing:0.7px">720</div>
<div style="left:688px;top:60px;font-size:6.3px;color:#555;white-space:nowrap;line-height:8px;letter-spacing:0.7px">760</div>
<div style="left:728px;top:60px;font-size:6.3px;color:#555;white-space:nowrap;line-height:8px;letter-spacing:0.7px">800</div>
<div style="left:768px;top:60px;font-size:6.3px;color:#555;white-space:nowrap;line-height:8px;letter-spacing:0.7px">840</div>
<div style="left:808px;top:60px;font-size:6.3px;color:#555;white-space:nowrap;line-height:8px;letter-spacing:0.7px">880</div>
<div style="left:848px;top:60px;font-size:6.3px;color:#555;white-space:nowrap;line-height:8px;letter-spacing:0.7px">920</div>
<div style="left:888px;top:60px;font-size:6.3px;color:#555;white-space:nowrap;line-height:8px;letter-spacing:0.7px">960</div>
<svg style="left:355px;top:61px;" width="550" height="8" viewBox="0 0 550 8"><path d="M11.5 0 v8 M15.5 6 v3 M19.5 6 v3 M23.5 6 v3 M27.5 6 v3 M31.5 5 v3 M35.5 6 v3 M39.5 6 v3 M43.5 6 v3 M47.5 6 v3 M51.5 0 v8 M55.5 6 v3 M59.5 6 v3 M63.5 6 v3 M67.5 6 v3 M71.5 5 v3 M75.5 6 v3 M79.5 6 v3 M83.5 6 v3 M87.5 6 v3 M91.5 0 v8 M95.5 6 v3 M99.5 6 v3 M103.5 6 v3 M107.5 6 v3 M111.5 5 v3 M115.5 6 v3 M119.5 6 v3 M123.5 6 v3 M127.5 6 v3 M131.5 0 v8 M135.5 6 v3 M139.5 6 v3 M143.5 6 v3 M147.5 6 v3 M151.5 5 v3 M155.5 6 v3 M159.5 6 v3 M163.5 6 v3 M167.5 6 v3 M171.5 0 v8 M175.5 6 v3 M179.5 6 v3 M183.5 6 v3 M187.5 6 v3 M191.5 5 v3 M195.5 6 v3 M199.5 6 v3 M203.5 6 v3 M207.5 6 v3 M211.5 0 v8 M215.5 6 v3 M219.5 6 v3 M223.5 6 v3 M227.5 6 v3 M231.5 5 v3 M235.5 6 v3 M239.5 6 v3 M243.5 6 v3 M247.5 6 v3 M251.5 0 v8 M255.5 6 v3 M259.5 6 v3 M263.5 6 v3 M267.5 6 v3 M271.5 5 v3 M275.5 6 v3 M279.5 6 v3 M283.5 6 v3 M287.5 6 v3 M291.5 0 v8 M295.5 6 v3 M299.5 6 v3 M303.5 6 v3 M307.5 6 v3 M311.5 5 v3 M315.5 6 v3 M319.5 6 v3 M323.5 6 v3 M327.5 6 v3 M331.5 0 v8 M335.5 6 v3 M339.5 6 v3 M343.5 6 v3 M347.5 6 v3 M351.5 5 v3 M355.5 6 v3 M359.5 6 v3 M363.5 6 v3 M367.5 6 v3 M371.5 0 v8 M375.5 6 v3 M379.5 6 v3 M383.5 6 v3 M387.5 6 v3 M391.5 5 v3 M395.5 6 v3 M399.5 6 v3 M403.5 6 v3 M407.5 6 v3 M411.5 0 v8 M415.5 6 v3 M419.5 6 v3 M423.5 6 v3 M427.5 6 v3 M431.5 5 v3 M435.5 6 v3 M439.5 6 v3 M443.5 6 v3 M447.5 6 v3 M451.5 0 v8 M455.5 6 v3 M459.5 6 v3 M463.5 6 v3 M467.5 6 v3 M471.5 5 v3 M475.5 6 v3 M479.5 6 v3 M483.5 6 v3 M487.5 6 v3 M491.5 0 v8 M495.5 6 v3 M499.5 6 v3 M503.5 6 v3 M507.5 6 v3 M511.5 5 v3 M515.5 6 v3 M519.5 6 v3 M523.5 6 v3 M527.5 6 v3 M531.5 0 v8 M535.5 6 v3 M539.5 6 v3 M543.5 6 v3 M547.5 6 v3 M551.5 5 v3 M555.5 6 v3 M559.5 6 v3 M563.5 6 v3 M567.5 6 v3 " stroke="#8a8a8a" stroke-width="1" fill="none" shape-rendering="crispEdges"/></svg>
<div style="left:355px;top:80px;font-size:6.3px;line-height:8px;width:8px;color:#555;white-space:nowrap;writing-mode:vertical-rl;transform:rotate(180deg);letter-spacing:0.7px">240</div>
<div style="left:355px;top:120px;font-size:6.3px;line-height:8px;width:8px;color:#555;white-space:nowrap;writing-mode:vertical-rl;transform:rotate(180deg);letter-spacing:0.7px">280</div>
<div style="left:355px;top:160px;font-size:6.3px;line-height:8px;width:8px;color:#555;white-space:nowrap;writing-mode:vertical-rl;transform:rotate(180deg);letter-spacing:0.7px">320</div>
<div style="left:355px;top:200px;font-size:6.3px;line-height:8px;width:8px;color:#555;white-space:nowrap;writing-mode:vertical-rl;transform:rotate(180deg);letter-spacing:0.7px">360</div>
<div style="left:355px;top:240px;font-size:6.3px;line-height:8px;width:8px;color:#555;white-space:nowrap;writing-mode:vertical-rl;transform:rotate(180deg);letter-spacing:0.7px">400</div>
<div style="left:355px;top:280px;font-size:6.3px;line-height:8px;width:8px;color:#555;white-space:nowrap;writing-mode:vertical-rl;transform:rotate(180deg);letter-spacing:0.7px">440</div>
<div style="left:355px;top:320px;font-size:6.3px;line-height:8px;width:8px;color:#555;white-space:nowrap;writing-mode:vertical-rl;transform:rotate(180deg);letter-spacing:0.7px">480</div>
<div style="left:355px;top:360px;font-size:6.3px;line-height:8px;width:8px;color:#555;white-space:nowrap;writing-mode:vertical-rl;transform:rotate(180deg);letter-spacing:0.7px">520</div>
<svg style="left:355px;top:61px;" width="9" height="310" viewBox="0 0 9 310"><path d="M0 17.5 h9 M7 21.5 h3 M7 25.5 h3 M7 29.5 h3 M7 33.5 h3 M6 37.5 h3 M7 41.5 h3 M7 45.5 h3 M7 49.5 h3 M7 53.5 h3 M0 57.5 h9 M7 61.5 h3 M7 65.5 h3 M7 69.5 h3 M7 73.5 h3 M6 77.5 h3 M7 81.5 h3 M7 85.5 h3 M7 89.5 h3 M7 93.5 h3 M0 97.5 h9 M7 101.5 h3 M7 105.5 h3 M7 109.5 h3 M7 113.5 h3 M6 117.5 h3 M7 121.5 h3 M7 125.5 h3 M7 129.5 h3 M7 133.5 h3 M0 137.5 h9 M7 141.5 h3 M7 145.5 h3 M7 149.5 h3 M7 153.5 h3 M6 157.5 h3 M7 161.5 h3 M7 165.5 h3 M7 169.5 h3 M7 173.5 h3 M0 177.5 h9 M7 181.5 h3 M7 185.5 h3 M7 189.5 h3 M7 193.5 h3 M6 197.5 h3 M7 201.5 h3 M7 205.5 h3 M7 209.5 h3 M7 213.5 h3 M0 217.5 h9 M7 221.5 h3 M7 225.5 h3 M7 229.5 h3 M7 233.5 h3 M6 237.5 h3 M7 241.5 h3 M7 245.5 h3 M7 249.5 h3 M7 253.5 h3 M0 257.5 h9 M7 261.5 h3 M7 265.5 h3 M7 269.5 h3 M7 273.5 h3 M6 277.5 h3 M7 281.5 h3 M7 285.5 h3 M7 289.5 h3 M7 293.5 h3 M0 297.5 h9 M7 301.5 h3 M7 305.5 h3 M7 309.5 h3 " stroke="#8a8a8a" stroke-width="1" fill="none" shape-rendering="crispEdges"/></svg>
<div style="left:365px;top:70px;width:424px;height:301px;background:#ffffff;"></div>
<div style="left:717px;top:70px;width:1px;height:301px;background:#b4b8e8;"></div>
<svg style="left:365px;top:70px;" width="424" height="301" viewBox="0 0 424 301">
<g fill="none" stroke-linecap="round" stroke-linejoin="round">
<path d="M17 182 C50 168 110 146 170 133" stroke="#808186" stroke-width="1.5"/>
<path d="M40 187 C60 172 90 157 108 149 C118 144 126 140 132 138" stroke="#85868b" stroke-width="1.3"/><path d="M132 138 C136 136.500 139 135.500 142 134.500" stroke="#c0c1c4" stroke-width="1"/>
<path d="M172 135.500 C166 150 158 166 153 174 C148 183 143 191 138.800 197" stroke="#77787d" stroke-width="1.300"/>
<path d="M0 176 C25 179 60 183 100 185" stroke="#a4a5a9" stroke-width="1.1"/>
<path d="M9.600 201.300 C45 189 85 175 120 164.500" stroke="#808186" stroke-width="1.400"/><path d="M120 164.500 C128 162 135 160 141 158.500" stroke="#bcbdc0" stroke-width="1"/>
<path d="M11.700 212.700 C45 209 80 204 110 199" stroke="#808186" stroke-width="1.400"/>
<path d="M43 195 C34 198 36 202 46 203.500 C65 206 90 207 112 208.500" stroke="#85868b" stroke-width="1.300"/>
<path d="M6 254 C50 225 100 198 151 172" stroke="#606166" stroke-width="1.900"/><path d="M150 173 C125 183 100 194 82 203.500" stroke="#808186" stroke-width="1.200"/>
<path d="M0 250 C35 232 75 214 110 200" stroke="#77787d" stroke-width="1.4"/>
<path d="M7 253 C40 235 80 216 112 201" stroke="#77787d" stroke-width="1.2"/>
<path d="M0 267 C18 262 40 256 58 248 C80 238 100 225 112 215" stroke="#c4c5c8" stroke-width="1"/>
<path d="M0 192 C10 200 18 215 20 232" stroke="#c4c5c8" stroke-width="1"/>
<path d="M0 222 C8 230 14 242 16 256" stroke="#bcbdc0" stroke-width="1"/>
<path d="M0 277 C6 276 10 275 16 273" stroke="#d0d0d2" stroke-width="1"/>
<path d="M60 190 C75 200 85 205 95 206" stroke="#c4c5c8" stroke-width="0.9"/>
<path d="M40 225 C50 215 58 205 62 198" stroke="#d0d0d2" stroke-width="0.9"/>
<path d="M118 211 C100 216 97 228 110 233 C128 240 155 237 174 229" stroke="#94959a" stroke-width="1.3"/>
<path d="M116 204 L159 267" stroke="#606166" stroke-width="1.8"/>
<path d="M137 197 L170 252" stroke="#66676c" stroke-width="1.6"/>
<path d="M138 202 L167 231 L173 229" stroke="#6a6b70" stroke-width="1.4"/>
<path d="M137 198 C150 225 165 255 176 272" stroke="#707176" stroke-width="1.4"/>
<path d="M118 206 L160 270" stroke="#808186" stroke-width="1"/>
<path d="M166.300 182.500 C166 192 167 202 179.400 217 L141 201.500" stroke="#77787d" stroke-width="1.300"/>
<path d="M140 200 C155 190 165 185 175 182" stroke="#c8c8ca" stroke-width="0.9"/>
<ellipse cx="167" cy="267" rx="9.7" ry="7" stroke="#808186" stroke-width="1.2"/>
<path d="M57 301 C62 270 100 258 130 258 C160 258 178 268 176 278" stroke="#7a7b80" stroke-width="1.6"/>
<path d="M62 301 C72 275 100 266 128 266 C160 266 175 285 178 301" stroke="#808186" stroke-width="1.5"/>
<path d="M70 301 C80 280 100 272 122 273 C150 274 163 290 167 301" stroke="#8a8b90" stroke-width="1.4"/>
<path d="M82 301 C90 288 102 280 118 281 C140 282 150 292 155 301" stroke="#808186" stroke-width="1.4"/>
<path d="M97 301 C102 292 110 288 120 289 C132 290 138 296 141 301" stroke="#94959a" stroke-width="1.3"/>
<ellipse cx="123" cy="269.500" rx="54" ry="11" transform="rotate(-3 123 269.500)" stroke="#85868b" stroke-width="1.300"/>
<path d="M99 302 C100 270 108 250 118 250 C128 250 131 280 128 302" stroke="#9a9ba0" stroke-width="1.100"/>
<path d="M110 302 C112 275 122 256 134 258 C146 260 150 284 150 302" stroke="#a4a5a9" stroke-width="1.100"/>
<path d="M147 264 C170 268 188 280 191 302" stroke="#8a8b90" stroke-width="1.300"/>
<path d="M140 262 C165 258 190 270 198 301" stroke="#a4a5a9" stroke-width="1.100"/>
<path d="M155 262 C175 266 186 280 190 301" stroke="#b0b1b5" stroke-width="1"/>
<path d="M55 301 L75 262 L64 301 M72 301 L92 258 L80 301" stroke="#66676c" stroke-width="1.5"/>
<path d="M50 301 L68 268 M78 262 L60 296" stroke="#77787d" stroke-width="1.2"/>
<path d="M84 246 L66 282" stroke="#85868b" stroke-width="1.1"/>
<path d="M52 270 C62 274 75 282 85 290" stroke="#c0c0c2" stroke-width="0.9"/>
<path d="M100 301 C105 280 115 265 125 258" stroke="#bcbdc0" stroke-width="0.9"/>
<path d="M110 301 C112 285 118 272 126 262" stroke="#b0b1b5" stroke-width="0.9"/>
<path d="M126 242 C130 262 138 282 148 301" stroke="#c0c0c2" stroke-width="0.9"/>
<path d="M112 250 C105 262 100 272 98 280" stroke="#d0d0d2" stroke-width="0.9"/>
</g>
<text x="252" y="170" font-size="22" font-family="DejaVu Sans Light, DejaVu Sans, Liberation Sans, sans-serif" font-weight="200" fill="#66676a" stroke="#66676a" stroke-width="0.350" letter-spacing="1" transform="rotate(2 252 170)">this</text>
<g fill="none" stroke="#55565a" stroke-linecap="round">
<path d="M313.500 163.800 L347 163.300" stroke-width="1.2"/>
<path d="M346.700 153.500 L346.700 164" stroke-width="1.8" stroke="#333"/>
<path d="M347.500 155 L360.800 161.700 L349 167.500" stroke-width="1.1"/>
<circle cx="347" cy="169.200" r="1.3" stroke-width="0.7" stroke="#555" fill="#fff"/>
</g>
</svg>
<div style="left:355px;top:371px;width:208px;height:7px;background:#707174;"></div>
<div style="left:356.5px;top:371.5px;width:39px;height:6.5px;background:#3e3e3e;"></div>
<svg style="left:356.5px;top:371.5px;" width="39" height="6.5" viewBox="0 0 39 6.5"><path d="M2.0 6.500 L25.4 1 L25.4 6.500 Z" fill="#686868"/></svg>
<div style="left:398px;top:371.5px;width:19px;height:6.5px;background:#3e3e3e;"></div>
<svg style="left:398px;top:371.5px;" width="19" height="6.5" viewBox="0 0 19 6.5"><path d="M0.0 6.500 L19.0 1 L19.0 6.500 Z" fill="#686868"/></svg>
<div style="left:456.5px;top:371.5px;width:30px;height:6.5px;background:#3e3e3e;"></div>
<svg style="left:456.5px;top:371.5px;" width="30" height="6.5" viewBox="0 0 30 6.5"><path d="M13.5 6.500 L30.0 1 L30.0 6.500 Z" fill="#686868"/></svg>
<div style="left:488px;top:371.5px;width:29px;height:6.5px;background:#3e3e3e;"></div>
<svg style="left:488px;top:371.5px;" width="29" height="6.5" viewBox="0 0 29 6.5"><path d="M2.9 6.500 L16.0 1 L16.0 6.500 Z" fill="#686868"/></svg>
<div style="left:357px;top:370px;font-size:6.4px;color:#e0e0e0;white-space:nowrap;line-height:8px;">200.0</div>
<div style="left:459px;top:370px;font-size:6.4px;color:#e0e0e0;white-space:nowrap;line-height:8px;">0.0</div>
<svg style="left:488px;top:371.5px;" width="29" height="6.5" viewBox="0 0 29 6.5"><path d="M16 1 L26 6.500 H16 Z" fill="#686868"/></svg>
<div style="left:446.5px;top:371.5px;width:8px;height:6.5px;background:#1c1c1c;"></div>
<div style="left:448.5px;top:373px;width:4px;height:3.5px;background:#3a3a3a;border:0.600px solid #ddd;box-sizing:border-box"></div>
<svg style="left:422px;top:371px;" width="8" height="7" viewBox="0 0 8 7"><circle cx="3.300" cy="3" r="2" fill="#e8e8e8" stroke="#444" stroke-width="0.600"/><path d="M4.800 4.600 L7 6.800" stroke="#333" stroke-width="1.100"/></svg>
<svg style="left:434px;top:371px;" width="8" height="7" viewBox="0 0 8 7"><circle cx="3.300" cy="3" r="2" fill="#e8e8e8" stroke="#444" stroke-width="0.600"/><path d="M4.800 4.600 L7 6.800" stroke="#333" stroke-width="1.100"/></svg>
<svg style="left:521px;top:371px;" width="36" height="7" viewBox="0 0 36 7"><path d="M2 6.500 C0.500 1 8 1 6.500 6.500 M13.500 6.500 C12 1 19.500 1 18 6.500" fill="none" stroke="#2a2a2a" stroke-width="1.200"/><circle cx="28.500" cy="3.500" r="2.600" fill="none" stroke="#555" stroke-width="0.900" stroke-dasharray="1 0.800"/></svg>
<div style="left:557px;top:371.5px;width:5px;height:6.5px;background:#8a8b8e;"></div>
<svg style="left:558px;top:373px;" width="4" height="4" viewBox="0 0 4 4"><path d="M3.500 0 L0.500 2 L3.500 4 Z" fill="#333"/></svg>
<div style="left:563px;top:371px;width:342px;height:7px;background:#4a4a4a;"></div>
<div style="left:905px;top:46px;width:28px;height:332px;background:#4a4a4a;"></div>
<div style="left:933px;top:46px;width:8px;height:332px;background:#5e5f61;"></div>
<div style="left:933px;top:47px;width:8px;height:13px;background:#8a8b8e;"></div>
<svg style="left:935px;top:52px;" width="5" height="4" viewBox="0 0 5 4"><path d="M0.500 0.500 H4.500 L2.500 3.500 Z" fill="#222"/></svg>
<div style="left:933px;top:61px;width:8px;height:8px;background:#8a8b8e;"></div>
<svg style="left:935px;top:63px;" width="5" height="4" viewBox="0 0 5 4"><path d="M2.500 0.500 L4.500 3.500 H0.500 Z" fill="#222"/></svg>
<div style="left:933px;top:182px;width:8px;height:120px;background:#77787b;"></div>
<div style="left:933px;top:363px;width:8px;height:7px;background:#8a8b8e;"></div>
<svg style="left:935px;top:365px;" width="5" height="4" viewBox="0 0 5 4"><path d="M2.500 3.500 L4.500 0.500 H0.500 Z" fill="#222"/></svg>
<div style="left:926px;top:371px;width:8px;height:7px;background:#8a8b8e;"></div>
<svg style="left:928px;top:372px;" width="5" height="5" viewBox="0 0 5 5"><path d="M1 0.500 L4 2.500 L1 4.500 Z" fill="#222"/></svg>
<div style="left:942px;top:46px;width:18px;height:468px;background:#6a6b6e;"></div>
<div style="left:942px;top:31px;width:18px;height:15px;background:#77787b;"></div>
<svg style="left:943px;top:33px;" width="9" height="8" viewBox="0 0 9 8"><path d="M3.2 0.700 L0.6 3.700 L3.2 6.700 M6.6 0.700 L4.0 3.700 L6.6 6.700" fill="none" stroke="#d6d6d6" stroke-width="1.300"/></svg>
<svg style="left:952px;top:33px;" width="9" height="8" viewBox="0 0 9 8"><path d="M3.2 0.700 L0.6 3.700 L3.2 6.700 M6.6 0.700 L4.0 3.700 L6.6 6.700" fill="none" stroke="#d6d6d6" stroke-width="1.300"/></svg>
<div style="left:941px;top:31px;width:1px;height:483px;background:#58595b;"></div>
<div style="left:950px;top:31px;width:1px;height:483px;background:#58595b;"></div>
<div style="left:951px;top:31px;width:1px;height:483px;background:#77787b;"></div>
<div style="left:923px;top:152px;width:10px;height:22px;background:#2e2e2e;"></div>
<svg style="left:924px;top:153px;" width="9" height="10" viewBox="0 0 9 10"><path d="M1 1 C6 1 8 4 8 9" fill="none" stroke="#eee" stroke-width="2.2"/></svg>
<div style="left:923px;top:164px;width:10px;height:10px;background:#3a3a3a;"></div>
<svg style="left:925px;top:166px;" width="6" height="5" viewBox="0 0 6 5"><path d="M0.500 0.500 H5.500 L3 4.500 Z" fill="#ddd"/></svg>
<div style="left:923px;top:174px;width:10px;height:7px;background:#8a8b8e;"></div>
<svg style="left:925px;top:175px;" width="6" height="5" viewBox="0 0 6 5"><path d="M3 0.500 L5.500 4.500 H0.500 Z" fill="#fff"/></svg>
<div style="left:923px;top:181px;width:10px;height:2px;background:#2e2e2e;"></div>
<div style="left:142px;top:67px;width:110px;height:14px;background:#2e2e2e;"></div>
<div style="left:143px;top:68px;width:108px;height:12px;background:linear-gradient(#4e4e4e,#424242);"></div>
<svg style="left:147px;top:71px;" width="6" height="6" viewBox="0 0 6 6"><path d="M0 0 L2 2.500 L0 5 Z" fill="#8a8a8a"/><path d="M3 0.500 H6 M3 2.500 H6 M3 4.500 H6" stroke="#8a8a8a" stroke-width="0.7"/></svg>
<div style="left:143px;top:69px;font-size:6.2px;color:#e0e0e0;white-space:nowrap;line-height:9px;width:108px;text-align:center;">Color Wheel</div>
<svg style="left:229px;top:68px;" width="10" height="10" viewBox="0 0 10 10"><circle cx="5" cy="5" r="4.5" fill="#1c1c1c" stroke="#9a9a9a" stroke-width="0.6"/><rect x="2.4" y="5.6" width="5.2" height="1.3" fill="#e8e8e8"/><rect x="2.4" y="3.4" width="5.2" height="0.7" fill="#777"/></svg>
<svg style="left:239px;top:68px;" width="10" height="10" viewBox="0 0 10 10"><circle cx="5" cy="5" r="4.5" fill="#1c1c1c" stroke="#9a9a9a" stroke-width="0.6"/><path d="M2.9 2.900 L7.1 7.100 M7.1 2.900 L2.9 7.100" stroke="#f4f4f4" stroke-width="1.5"/></svg>
<div style="left:142px;top:81px;width:110px;height:83px;background:#2e2e2e;"></div>
<div style="left:143px;top:82px;width:108px;height:12px;background:linear-gradient(#4e4e4e,#424242);"></div>
<svg style="left:147px;top:85px;" width="6" height="6" viewBox="0 0 6 6"><path d="M0 0 L2 2.500 L0 5 Z" fill="#8a8a8a"/><path d="M3 0.500 H6 M3 2.500 H6 M3 4.500 H6" stroke="#8a8a8a" stroke-width="0.7"/></svg>
<div style="left:143px;top:83px;font-size:6.2px;color:#e0e0e0;white-space:nowrap;line-height:9px;width:108px;text-align:center;">Color History</div>
<svg style="left:229px;top:83px;" width="10" height="10" viewBox="0 0 10 10"><circle cx="5" cy="5" r="4.5" fill="#1c1c1c" stroke="#9a9a9a" stroke-width="0.6"/><rect x="2.4" y="5.6" width="5.2" height="1.3" fill="#e8e8e8"/><rect x="2.4" y="3.4" width="5.2" height="0.7" fill="#777"/></svg>
<svg style="left:239px;top:83px;" width="10" height="10" viewBox="0 0 10 10"><circle cx="5" cy="5" r="4.5" fill="#1c1c1c" stroke="#9a9a9a" stroke-width="0.6"/><path d="M2.9 2.900 L7.1 7.100 M7.1 2.900 L2.9 7.100" stroke="#f4f4f4" stroke-width="1.5"/></svg>
<div style="left:143px;top:93px;width:108px;height:70px;background:#77787b;"></div>
<div style="left:144px;top:93px;width:97px;height:61px;background:#5a5b5d;"></div>
<div style="left:145.0px;top:93.5px;width:8.8px;height:8.4px;background:#1e2230;"></div>
<div style="left:154.5px;top:93.5px;width:8.8px;height:8.4px;background:#ffffff;"></div>
<div style="left:163.9px;top:93.5px;width:8.8px;height:8.4px;background:#999999;"></div>
<div style="left:173.4px;top:93.5px;width:8.8px;height:8.4px;background:#0a0a0a;"></div>
<div style="left:182.9px;top:93.5px;width:8.8px;height:8.4px;background:#4a4838;"></div>
<div style="left:192.3px;top:93.5px;width:8.8px;height:8.4px;background:#4e3a30;"></div>
<div style="left:201.8px;top:93.5px;width:8.8px;height:8.4px;background:#d08040;"></div>
<div style="left:211.3px;top:93.5px;width:8.8px;height:8.4px;background:#d06a28;"></div>
<div style="left:220.8px;top:93.5px;width:8.8px;height:8.4px;background:#303030;"></div>
<div style="left:230.2px;top:93.5px;width:8.8px;height:8.4px;background:#2a3a55;"></div>
<div style="left:145.0px;top:102.5px;width:8.8px;height:8.4px;background:#8a4a42;"></div>
<div style="left:154.5px;top:102.5px;width:8.8px;height:8.4px;background:#7a4038;"></div>
<div style="left:163.9px;top:102.5px;width:8.8px;height:8.4px;background:#3a3838;"></div>
<div style="left:173.4px;top:102.5px;width:8.8px;height:8.4px;background:#101010;"></div>
<div style="left:182.9px;top:102.5px;width:8.8px;height:8.4px;background:#3a3c40;"></div>
<div style="left:192.3px;top:102.5px;width:8.8px;height:8.4px;background:#0a2048;"></div>
<div style="left:201.8px;top:102.5px;width:8.8px;height:8.4px;background:#383838;"></div>
<div style="left:211.3px;top:102.5px;width:8.8px;height:8.4px;background:#fde8ec;"></div>
<div style="left:220.8px;top:102.5px;width:8.8px;height:8.4px;background:#8a5040;"></div>
<div style="left:230.2px;top:102.5px;width:8.8px;height:8.4px;background:#2a4a60;"></div>
<div style="left:145.0px;top:111.6px;width:8.8px;height:8.4px;background:#a8705a;"></div>
<div style="left:154.5px;top:111.6px;width:8.8px;height:8.4px;background:#b0b0b0;"></div>
<div style="left:163.9px;top:111.6px;width:8.8px;height:8.4px;background:#9a6840;"></div>
<div style="left:173.4px;top:111.6px;width:8.8px;height:8.4px;background:#fbb838;"></div>
<div style="left:182.9px;top:111.6px;width:8.8px;height:8.4px;background:#a878a0;"></div>
<div style="left:192.3px;top:111.6px;width:8.8px;height:8.4px;background:#6a5a50;"></div>
<div style="left:201.8px;top:111.6px;width:8.8px;height:8.4px;background:#6a5c48;"></div>
<div style="left:211.3px;top:111.6px;width:8.8px;height:8.4px;background:#4a20b0;"></div>
<div style="left:220.8px;top:111.6px;width:8.8px;height:8.4px;background:#c09068;"></div>
<div style="left:230.2px;top:111.6px;width:8.8px;height:8.4px;background:#d06028;"></div>
<div style="left:145.0px;top:120.7px;width:8.8px;height:8.4px;background:#f85060;"></div>
<div style="left:154.5px;top:120.7px;width:8.8px;height:8.4px;background:#281878;"></div>
<div style="left:163.9px;top:120.7px;width:8.8px;height:8.4px;background:#909090;"></div>
<div style="left:173.4px;top:120.7px;width:8.8px;height:8.4px;background:#c01810;"></div>
<div style="left:182.9px;top:120.7px;width:8.8px;height:8.4px;background:#282078;"></div>
<div style="left:192.3px;top:120.7px;width:8.8px;height:8.4px;background:#7070ff;"></div>
<div style="left:201.8px;top:120.7px;width:8.8px;height:8.4px;background:#383880;"></div>
<div style="left:211.3px;top:120.7px;width:8.8px;height:8.4px;background:#8890ff;"></div>
<div style="left:220.8px;top:120.7px;width:8.8px;height:8.4px;background:#8a8a8a;"></div>
<div style="left:230.2px;top:120.7px;width:8.8px;height:8.4px;background:#5a5a5a;"></div>
<div style="left:145.0px;top:129.7px;width:8.8px;height:8.4px;background:#ffffff;"></div>
<div style="left:154.5px;top:129.7px;width:8.8px;height:8.4px;background:#fbb030;"></div>
<div style="left:163.9px;top:129.7px;width:8.8px;height:8.4px;background:#e84040;"></div>
<div style="left:173.4px;top:129.7px;width:8.8px;height:8.4px;background:#fdd060;"></div>
<div style="left:182.9px;top:129.7px;width:8.8px;height:8.4px;background:#503028;"></div>
<div style="left:192.3px;top:129.7px;width:8.8px;height:8.4px;background:#7a5a50;"></div>
<div style="left:201.8px;top:129.7px;width:8.8px;height:8.4px;background:#483830;"></div>
<div style="left:211.3px;top:129.7px;width:8.8px;height:8.4px;background:#704848;"></div>
<div style="left:220.8px;top:129.7px;width:8.8px;height:8.4px;background:#c86060;"></div>
<div style="left:230.2px;top:129.7px;width:8.8px;height:8.4px;background:#b09080;"></div>
<div style="left:145.0px;top:138.8px;width:8.8px;height:8.4px;background:#5a4038;"></div>
<div style="left:154.5px;top:138.8px;width:8.8px;height:8.4px;background:#b87860;"></div>
<div style="left:163.9px;top:138.8px;width:8.8px;height:8.4px;background:#2a2a2a;"></div>
<div style="left:173.4px;top:138.8px;width:8.8px;height:8.4px;background:#00ffff;"></div>
<div style="left:182.9px;top:138.8px;width:8.8px;height:8.4px;background:#ffe800;"></div>
<div style="left:192.3px;top:138.8px;width:8.8px;height:8.4px;background:#f88010;"></div>
<div style="left:201.8px;top:138.8px;width:8.8px;height:8.4px;background:#ff4820;"></div>
<div style="left:211.3px;top:138.8px;width:8.8px;height:8.4px;background:#a06840;"></div>
<div style="left:220.8px;top:138.8px;width:8.8px;height:8.4px;background:#404040;"></div>
<div style="left:230.2px;top:138.8px;width:8.8px;height:8.4px;background:#c84848;"></div>
<div style="left:145.0px;top:147.8px;width:8.8px;height:6px;background:#f08080;"></div>
<div style="left:154.5px;top:147.8px;width:8.8px;height:6px;background:#0000ff;"></div>
<div style="left:163.9px;top:147.8px;width:8.8px;height:6px;background:#60e0e8;"></div>
<div style="left:173.4px;top:147.8px;width:8.8px;height:6px;background:#ff0000;"></div>
<div style="left:182.9px;top:147.8px;width:8.8px;height:6px;background:#7070ff;"></div>
<div style="left:192.3px;top:147.8px;width:8.8px;height:6px;background:#b0a8ff;"></div>
<div style="left:201.8px;top:147.8px;width:8.8px;height:6px;background:#9088a8;"></div>
<div style="left:211.3px;top:147.8px;width:8.8px;height:6px;background:#e0e0ff;"></div>
<div style="left:220.8px;top:147.8px;width:8.8px;height:6px;background:#705888;"></div>
<div style="left:230.2px;top:147.8px;width:8.8px;height:6px;background:#806890;"></div>
<div style="left:145px;top:93.5px;width:8.8px;height:8.4px;border:1px solid #e83030;box-sizing:border-box"></div>
<div style="left:241px;top:93px;width:8px;height:61px;background:#6a6b6e;"></div>
<div style="left:241px;top:93px;width:8px;height:8px;background:#8e8f92;"></div>
<div style="left:241px;top:101px;width:8px;height:9px;background:#8a8b8e;"></div>
<div style="left:241px;top:146px;width:8px;height:8px;background:#8e8f92;"></div>
<svg style="left:242.5px;top:95px;" width="5" height="4" viewBox="0 0 5 4"><path d="M2.5 0.500 L4.500 3.500 H0.500 Z" fill="#333"/></svg>
<svg style="left:242.5px;top:148px;" width="5" height="4" viewBox="0 0 5 4"><path d="M2.5 3.500 L4.500 0.500 H0.500 Z" fill="#333"/></svg>
<div style="left:145px;top:156px;width:4px;height:4px;background:#8a0a0a;border:0.5px solid #400"></div>
<div style="left:165px;top:156px;width:4px;height:4px;background:#0a8a0a;border:0.5px solid #040"></div>
<div style="left:185px;top:156px;width:4px;height:4px;background:#1010e0;border:0.5px solid #004"></div>
<div style="left:824px;top:38px;width:110px;height:110px;background:#2c2c2c;"></div>
<div style="left:825px;top:39px;width:108px;height:11px;background:linear-gradient(#4e4e4e,#424242);"></div>
<svg style="left:829px;top:41px;" width="6" height="6" viewBox="0 0 6 6"><path d="M0 0 L2 2.500 L0 5 Z" fill="#8a8a8a"/><path d="M3 0.500 H6 M3 2.500 H6 M3 4.500 H6" stroke="#8a8a8a" stroke-width="0.7"/></svg>
<div style="left:825px;top:38.5px;font-size:6.2px;color:#d4d4d4;white-space:nowrap;line-height:9px;width:108px;text-align:center;">Navigator</div>
<svg style="left:911px;top:39px;" width="10" height="10" viewBox="0 0 10 10"><circle cx="5" cy="5" r="4.5" fill="#1c1c1c" stroke="#9a9a9a" stroke-width="0.6"/><rect x="2.4" y="5.6" width="5.2" height="1.3" fill="#e8e8e8"/><rect x="2.4" y="3.4" width="5.2" height="0.7" fill="#777"/></svg>
<svg style="left:921px;top:39px;" width="10" height="10" viewBox="0 0 10 10"><circle cx="5" cy="5" r="4.5" fill="#1c1c1c" stroke="#9a9a9a" stroke-width="0.6"/><path d="M2.9 2.900 L7.1 7.100 M7.1 2.900 L2.9 7.100" stroke="#f4f4f4" stroke-width="1.5"/></svg>
<div style="left:825px;top:50px;width:108px;height:97px;background:#444444;"></div>
<div style="left:827px;top:60.5px;width:103px;height:77px;background:#ffffff;"></div>
<svg style="left:827px;top:60.5px;" width="103" height="77" viewBox="0 0 103 77">
<g fill="none" stroke="#8e909a" stroke-width="0.600" stroke-linecap="round">
<path d="M21.500 43 L46 44.700" stroke="#55575f" stroke-width="1"/><path d="M22 44.500 L40 44"/>
<circle cx="34.200" cy="45.600" r="5.500" stroke="#a8aab2"/><path d="M30 48 C32 51 37 51 39 47"/>
<path d="M23 57 L36.600 56 L36 63 L23.500 63.500 Z" stroke="#666870" stroke-width="0.800"/><path d="M25.500 63 L20.700 72.500 M27 63 L24 71 M34.500 63 L33 70.500 M36.500 56 L37 64 M20.700 72.500 C24 70 28 69.500 31 69.500"/>
<path d="M33 51 L30 57 M38 50 C42 52 47 55 50 59 M37 60 C42 58 47 58 52 58 M40 62 L44 68 M46 60 L50 68"/>
<path d="M53.300 49.300 C60 46 66 44.500 71.600 44.500 C69 49 64 52 58 55 M55 47 C60 45 66 43.500 70 43.500"/>
<ellipse cx="66.900" cy="66" rx="5.500" ry="7.200" stroke="#777982"/><ellipse cx="67.200" cy="66.500" rx="3.500" ry="5" stroke="#a0a2aa"/>
<path d="M58 71.600 L62 59 M60 72 L64.500 59.500 M56.500 70 L60.500 59" stroke="#666870" stroke-width="0.800"/><path d="M70 52 L74 61 M72 51 L76 59 M62 58 C66 56 71 57 73 62"/>
</g>
<g fill="none" stroke="#b4b6be" stroke-width="0.500"><path d="M82.800 46.500 L87 46.500 M89.500 46.800 L95.500 46.500 L94 45.500 M94 47.500 L95.500 46.500"/><path d="M78.800 68.500 C82 67.500 86 69.500 90.800 68.800 M78.800 73 C84 72 90 73.500 96.300 72.400 M80 70.500 L84 70.300"/></g>
<rect x="53.200" y="27.500" width="52" height="35.900" fill="none" stroke="#ff3020" stroke-width="1"/>
</svg>
<div style="left:742px;top:147px;width:181px;height:224px;background:#2c2c2c;"></div>
<div style="left:743px;top:148px;width:179px;height:11px;background:linear-gradient(#4e4e4e,#424242);"></div>
<svg style="left:746px;top:151px;" width="6" height="6" viewBox="0 0 6 6"><path d="M0 0 L2 2.500 L0 5 Z" fill="#8a8a8a"/><path d="M3 0.500 H6 M3 2.500 H6 M3 4.500 H6" stroke="#8a8a8a" stroke-width="0.7"/></svg>
<div style="left:743px;top:149px;font-size:6.2px;color:#d4d4d4;white-space:nowrap;line-height:9px;width:179px;text-align:center;">Layer</div>
<svg style="left:902px;top:148.5px;" width="10" height="10" viewBox="0 0 10 10"><circle cx="5" cy="5" r="4.5" fill="#1c1c1c" stroke="#9a9a9a" stroke-width="0.6"/><rect x="2.4" y="5.6" width="5.2" height="1.3" fill="#e8e8e8"/><rect x="2.4" y="3.4" width="5.2" height="0.7" fill="#777"/></svg>
<svg style="left:912px;top:148.5px;" width="10" height="10" viewBox="0 0 10 10"><circle cx="5" cy="5" r="4.5" fill="#1c1c1c" stroke="#9a9a9a" stroke-width="0.6"/><path d="M2.9 2.900 L7.1 7.100 M7.1 2.900 L2.9 7.100" stroke="#f4f4f4" stroke-width="1.5"/></svg>
<div style="left:743px;top:159px;width:179px;height:211px;background:#7b7c7f;"></div>
<div style="left:743px;top:159px;width:179px;height:1px;background:#606164;"></div>
<div style="left:745px;top:160px;width:87px;height:10px;background:linear-gradient(#87888b,#77787b);border:1px solid #5e5f62;box-sizing:border-box;border-radius:1px"></div>
<div style="left:745px;top:160px;font-size:7.2px;color:#ececec;white-space:nowrap;line-height:10px;width:80px;text-align:center;">Normal</div>
<svg style="left:824px;top:163px;" width="6" height="5" viewBox="0 0 6 5"><path d="M0.5 0.500 H5.500 L3 4 Z" fill="#2a2a2a"/></svg>
<div style="left:833px;top:160px;width:65px;height:10px;background:#6e6f72;"></div>
<div style="left:836px;top:162px;width:60px;height:4px;background:repeating-conic-gradient(#fafafa 0% 25%, #c0c0c0 0% 50%) 0 0/2px 2px;"></div>
<div style="left:836px;top:162px;width:60px;height:4px;background:linear-gradient(90deg,rgba(255,255,255,0),rgba(200,200,200,0.9));"></div>
<div style="left:901px;top:160px;font-size:7.2px;color:#ececec;white-space:nowrap;line-height:10px;">100</div>
<svg style="left:913px;top:161px;" width="6" height="9" viewBox="0 0 6 9"><path d="M3 0.500 L5.500 3.500 H0.500 Z M3 8.500 L5.500 5.500 H0.500 Z" fill="#2a2a2a"/></svg>
<div style="left:743px;top:170px;width:179px;height:1px;background:#6a6b6e;"></div>
<div style="left:746px;top:173px;width:12px;height:10px;background:#88898c;border:1px solid #55565a;box-sizing:border-box"></div>
<svg style="left:761px;top:176px;" width="6" height="5" viewBox="0 0 6 5"><path d="M0.5 0.500 H5.500 L3 4 Z" fill="#2a2a2a"/></svg>
<svg style="left:790px;top:172px;" width="14" height="12" viewBox="0 0 14 12"><ellipse cx="7" cy="6.500" rx="6.300" ry="4" fill="#2a2a2a"/><ellipse cx="7" cy="5" rx="5.500" ry="2.200" fill="#d8d8d8"/><ellipse cx="7" cy="8.200" rx="4" ry="1" fill="#888"/></svg>
<svg style="left:805px;top:172px;" width="9" height="12" viewBox="0 0 9 12"><path d="M0.5 2.500 H8.500 M4.500 1 V4" stroke="#ddd" stroke-width="1.4"/><path d="M3.2 4 H5.800 L6.200 11.500 H2.800 Z" fill="#eee"/><rect x="3" y="4.500" width="3" height="2" fill="#333"/></svg>
<svg style="left:817px;top:171px;" width="7" height="13" viewBox="0 0 7 13"><path d="M1 1.500 C1 0 6 0 6 1.500 V6 H1 Z" fill="#2a88d8"/><path d="M1 6 H6 L3.500 12 Z" fill="#f0d020"/><path d="M2.800 10.500 L3.500 12.500 L4.200 10.500 Z" fill="#222"/></svg>
<svg style="left:828px;top:172px;" width="10" height="12" viewBox="0 0 10 12"><rect x="1" y="5" width="8" height="6.500" rx="1" fill="#555" stroke="#333" stroke-width="0.5"/><path d="M3 5 V3.500 C3 1 7 1 7 3.500 V5" fill="none" stroke="#444" stroke-width="1.2"/><circle cx="5" cy="8" r="1" fill="#888"/></svg>
<svg style="left:840px;top:171px;" width="12" height="13" viewBox="0 0 12 13"><rect x="1" y="4" width="5.500" height="4.500" rx="0.700" fill="#eee"/><path d="M2.300 4 V2.500 C2.300 0.500 5.500 0.500 5.500 2.500" fill="none" stroke="#eee" stroke-width="1"/><rect x="6" y="8" width="2.500" height="2.500" fill="#eee"/><rect x="8.500" y="10.500" width="2.500" height="2.500" fill="#eee"/><rect x="8.500" y="8" width="2.500" height="2.500" fill="#555"/><rect x="6" y="10.500" width="2.500" height="2.500" fill="#555"/></svg>
<div style="left:853px;top:172px;width:22px;height:11px;background:#707174;border:1px solid #5c5d60;box-sizing:border-box"></div>
<svg style="left:867px;top:176px;" width="6" height="5" viewBox="0 0 6 5"><path d="M0.5 0.500 H5.500 L3 4 Z" fill="#4a4a4c"/></svg>
<div style="left:876px;top:172px;width:22px;height:11px;background:#707174;border:1px solid #5c5d60;box-sizing:border-box"></div>
<svg style="left:890px;top:176px;" width="6" height="5" viewBox="0 0 6 5"><path d="M0.5 0.500 H5.500 L3 4 Z" fill="#4a4a4c"/></svg>
<svg style="left:855px;top:173px;" width="12" height="9" viewBox="0 0 12 9"><rect x="1" y="1" width="7" height="6" fill="#8a8b8e"/><path d="M7 5 L10 8 M10 5 L7 8" stroke="#5a5b5e" stroke-width="0.8"/></svg>
<svg style="left:878px;top:173px;" width="12" height="9" viewBox="0 0 12 9"><path d="M1 8 L9 1 V8 Z" fill="#8a8b8e"/><path d="M7 5 L10 8 M10 5 L7 8" stroke="#5a5b5e" stroke-width="0.8"/></svg>
<div style="left:900px;top:172px;width:21px;height:11px;background:#77787b;border:1px solid #5c5d60;box-sizing:border-box"></div>
<div style="left:902px;top:173px;width:7px;height:7px;background:#2a7ae0;"></div>
<div style="left:905px;top:176px;width:5px;height:5px;background:#f4f4f4;"></div>
<div style="left:902px;top:173px;width:6px;height:6px;background:#2a7ae0;"></div>
<svg style="left:913px;top:176px;" width="6" height="5" viewBox="0 0 6 5"><path d="M0.5 0.500 H5.500 L3 4 Z" fill="#2a2a2a"/></svg>
<div style="left:743px;top:184px;width:179px;height:1px;background:#6a6b6e;"></div>
<svg style="left:747px;top:187px;" width="9" height="11" viewBox="0 0 9 11"><path d="M1 3 L4.500 1 L8 3 L4.500 5 Z M1 5.500 L4.500 7.500 L8 5.500 M1 8 L4.500 10 L8 8" fill="none" stroke="#e8e8e8" stroke-width="0.8"/></svg>
<svg style="left:823px;top:186px;" width="11" height="12" viewBox="0 0 11 12"><path d="M0.5 0.500 H10 V8.500 L7 11.500 H0.500 Z" fill="#f6f6f6" stroke="#888" stroke-width="0.500"/><path d="M10 8.500 H7 V11.500" fill="#444"/></svg>
<svg style="left:835px;top:186px;" width="11" height="12" viewBox="0 0 11 12"><path d="M0.5 0.500 H8 V10 H0.500 Z" fill="#f0f0f0" stroke="#888" stroke-width="0.500"/><circle cx="8" cy="9" r="2.500" fill="#999" stroke="#555" stroke-width="0.500"/></svg>
<svg style="left:847px;top:186px;" width="11" height="12" viewBox="0 0 11 12"><rect x="0.500" y="0.500" width="6" height="8" fill="#aaa"/><path d="M4 3 H10 V11.500 H4 Z" fill="#f0f0f0" stroke="#888" stroke-width="0.500"/><path d="M7 9 H10 V11.500 H7 Z" fill="#444"/></svg>
<svg style="left:859px;top:187px;" width="10" height="10" viewBox="0 0 10 10"><path d="M5 1 L8.500 4.500 H6.500 V9 H3.500 V4.500 H1.500 Z" fill="#8a8b8e" stroke="#606164" stroke-width="0.600"/></svg>
<svg style="left:872px;top:187px;" width="10" height="10" viewBox="0 0 10 10"><path d="M5 1 L8.500 4.500 H6.500 V9 H3.500 V4.500 H1.500 Z" fill="#8a8b8e" stroke="#606164" stroke-width="0.600"/><path d="M1 8 L5 10 L9 8" fill="none" stroke="#606164" stroke-width="0.700"/></svg>
<svg style="left:883px;top:187px;" width="12" height="10" viewBox="0 0 12 10"><rect x="0.500" y="0.500" width="11" height="9" fill="#3a3a3a" stroke="#ddd" stroke-width="0.600"/><circle cx="6" cy="5" r="2.200" fill="#f4f4f4"/></svg>
<svg style="left:896px;top:187px;" width="9" height="10" viewBox="0 0 9 10"><path d="M1 9 L4 1 L5 5 L8 4 L6 9 Z" fill="#67686b"/></svg>
<svg style="left:908px;top:185px;" width="11" height="13" viewBox="0 0 11 13"><ellipse cx="5.500" cy="2.500" rx="4.500" ry="1.800" fill="#ddd" stroke="#666" stroke-width="0.500"/><path d="M1.500 4 L2.500 12 H8.500 L9.500 4 Z" fill="#f4f4f4" stroke="#777" stroke-width="0.500"/><path d="M4 6 V10 M7 6 V10" stroke="#999" stroke-width="0.800"/></svg>
<div style="left:746px;top:199px;width:176px;height:171px;background:#77787b;"></div>
<div style="left:746px;top:199px;width:168px;height:171px;background:#7b7c7f;border:1px solid #58595b;box-sizing:border-box"></div>
<div style="left:914px;top:199px;width:8px;height:171px;background:#77787b;"></div>
<div style="left:914px;top:199px;width:1px;height:171px;background:#58595b;"></div>
<div style="left:915px;top:362px;width:6px;height:7px;background:#8a8b8e;"></div>
<div style="left:757px;top:200px;width:1px;height:74px;background:#606164;"></div>
<div style="left:769px;top:200px;width:1px;height:74px;background:#606164;"></div>
<div style="left:770px;top:200px;width:143px;height:18px;background:#7b7c7f;"></div>
<div style="left:747px;top:218px;width:166px;height:1px;background:#606164;"></div>
<svg style="left:748px;top:206px;" width="9" height="6" viewBox="0 0 9 6"><path d="M0.500 3 C2.500 0 6.500 0 8.500 3 C6.500 6 2.500 6 0.500 3 Z" fill="#f0f0f0" stroke="#1a1a1a" stroke-width="0.700"/><circle cx="4.500" cy="3" r="1.900" fill="#1a1a1a"/></svg>
<svg style="left:771px;top:207px;" width="7" height="6" viewBox="0 0 7 6"><path d="M0.500 0.500 H6.500 L3.500 5 Z" fill="#f4f4f4"/></svg>
<svg style="left:781px;top:203px;" width="9" height="12" viewBox="0 0 9 12"><rect x="0.500" y="1" width="8" height="5" fill="#e8e8e8"/><path d="M1.500 0.500 V2 M3.500 0.500 V2 M5.500 0.500 V2 M7.500 0.500 V2" stroke="#c03030" stroke-width="0.700"/><rect x="0.500" y="7.500" width="8" height="3" fill="#e8e8e8"/><rect x="0.500" y="6" width="8" height="1.500" fill="#555"/></svg>
<div style="left:794px;top:200px;font-size:6.6px;color:#ececec;white-space:nowrap;line-height:9px;">100 % Normal</div>
<div style="left:794px;top:208px;font-size:6.6px;color:#ececec;white-space:nowrap;line-height:9px;">Folder 1 : 2</div>
<div style="left:770px;top:219px;width:143px;height:17px;background:#7b7c7f;"></div>
<div style="left:770px;top:236px;width:143px;height:1px;background:#606164;"></div>
<svg style="left:748px;top:224px;" width="9" height="6" viewBox="0 0 9 6"><path d="M0.500 3 C2.500 0.500 6.500 0.500 8.500 3 C6.500 5.500 2.500 5.500 0.500 3 Z" fill="#747578"/><circle cx="4.500" cy="3" r="1.500" fill="#6a6b6e"/></svg>
<div style="left:779px;top:220px;width:14px;height:14px;background:#222;border:1px solid #ddd;box-sizing:border-box"></div>
<svg style="left:780px;top:221px;" width="12" height="12" viewBox="0 0 12 12"><path d="M1 3 H4 V6 H1 Z M6 2 L10 5 M2 9 L9 8 M7 4 V10" stroke="#bbb" stroke-width="0.700" fill="none"/></svg>
<div style="left:794px;top:219px;font-size:6.6px;color:#ececec;white-space:nowrap;line-height:9px;">100 % Normal</div>
<div style="left:794px;top:227px;font-size:6.6px;color:#ececec;white-space:nowrap;line-height:9px;">props</div>
<div style="left:770px;top:237px;width:143px;height:18px;background:linear-gradient(#8ba4b4,#6e8a9c);"></div>
<div style="left:770px;top:255px;width:143px;height:1px;background:#606164;"></div>
<svg style="left:748px;top:243px;" width="9" height="6" viewBox="0 0 9 6"><path d="M0.500 3 C2.500 0 6.500 0 8.500 3 C6.500 6 2.500 6 0.500 3 Z" fill="#f0f0f0" stroke="#1a1a1a" stroke-width="0.700"/><circle cx="4.500" cy="3" r="1.900" fill="#1a1a1a"/></svg>
<svg style="left:759px;top:241px;" width="10" height="10" viewBox="0 0 10 10"><path d="M8.500 0.500 L9.500 1.500 L4 8 L2.500 6.500 Z" fill="#222"/><path d="M2.500 7 L1 9.500" stroke="#eee" stroke-width="1.200"/></svg>
<div style="left:778px;top:238px;width:15px;height:15px;background:#3a3a3a;"></div>
<div style="left:779.5px;top:239.5px;width:12px;height:12px;background:repeating-conic-gradient(#ffffff 0% 25%, #d0d0d0 0% 50%) 0 0/3px 3px;"></div>
<div style="left:794px;top:238px;font-size:6.6px;color:#f4f4f4;white-space:nowrap;line-height:9px;">100 % Normal</div>
<div style="left:794px;top:246px;font-size:6.6px;color:#f4f4f4;white-space:nowrap;line-height:9px;">1</div>
<div style="left:758px;top:256px;width:155px;height:18px;background:#7b7c7f;"></div>
<div style="left:747px;top:274px;width:166px;height:1px;background:#606164;"></div>
<svg style="left:748px;top:262px;" width="9" height="6" viewBox="0 0 9 6"><path d="M0.500 3 C2.500 0 6.500 0 8.500 3 C6.500 6 2.500 6 0.500 3 Z" fill="#f0f0f0" stroke="#1a1a1a" stroke-width="0.700"/><circle cx="4.500" cy="3" r="1.900" fill="#1a1a1a"/></svg>
<div style="left:773px;top:258px;width:13px;height:13px;background:#ffffff;border:0.500px solid #555;box-sizing:border-box"></div>
<svg style="left:789px;top:257px;" width="12" height="13" viewBox="0 0 12 13"><path d="M1 0.500 H8 L11 3.500 V12.500 H1 Z" fill="#f4f4f4" stroke="#444" stroke-width="0.600"/><path d="M3 2 H7 L9 4 V10 H3 Z" fill="none" stroke="#555" stroke-width="0.600"/></svg>
<div style="left:802px;top:265px;font-size:6.6px;color:#ececec;white-space:nowrap;line-height:9px;">Paper</div>
<div style="left:742px;top:371px;width:163px;height:7px;background:#3a3a3a;"></div>
<div style="left:747px;top:371px;width:60px;height:6px;background:#6a6b6e;"></div>
<div style="left:807px;top:371px;width:59px;height:6px;background:#6a6b6e;"></div>
<div style="left:804px;top:373px;width:5px;height:2px;background:#999;"></div>
<div style="left:136px;top:378px;width:806px;height:136px;background:#6a6b6e;"></div>
<div style="left:136px;top:378px;width:806px;height:2px;background:#58595b;"></div>
<div style="left:136px;top:380px;width:12px;height:134px;background:linear-gradient(90deg,#58595b,#6c6d70 60%);"></div>
<div style="left:147px;top:380px;width:1px;height:134px;background:#58595b;"></div>
<svg style="left:139px;top:384px;" width="6" height="8" viewBox="0 0 6 8"><path d="M0 1 H6 M0 3 H6 M0 5 H6" stroke="#5a5b5e" stroke-width="0.800"/></svg>
<div style="left:148px;top:380px;width:793px;height:11px;background:#5c5d60;"></div>
<div style="left:149px;top:381px;width:9px;height:10px;background:#57585a;"></div>
<svg style="left:151px;top:383px;" width="6" height="6" viewBox="0 0 6 6"><path d="M0 0 L2 2.500 L0 5 Z" fill="#aaa"/><path d="M3 0.500 H6 M3 2.500 H6 M3 4.500 H6" stroke="#aaa" stroke-width="0.700"/></svg>
<div style="left:160px;top:381px;width:42px;height:10px;background:#7d7e81;"></div>
<svg style="left:163px;top:382.5px;" width="10" height="7" viewBox="0 0 10 7"><rect x="0.500" y="0.500" width="9" height="6" fill="#444"/><rect x="1.500" y="2" width="2" height="3" fill="#ddd"/><rect x="4" y="2" width="2" height="3" fill="#ddd"/><rect x="6.500" y="2" width="2" height="3" fill="#8ab0d0"/></svg>
<div style="left:175px;top:381px;font-size:6.6px;color:#f0f0f0;white-space:nowrap;line-height:10px;">Timeline</div>
<div style="left:204px;top:381px;width:59px;height:10px;background:#6a6b6e;"></div>
<svg style="left:208px;top:382px;" width="8" height="8" viewBox="0 0 8 8"><path d="M4 0.500 L7.500 7.500 H0.500 Z" fill="#9a9b9e"/><rect x="3.500" y="3" width="1" height="2.500" fill="#555"/></svg>
<div style="left:219px;top:381px;font-size:6.5px;color:#929396;white-space:nowrap;line-height:10px;">Animation cels</div>
<div style="left:148px;top:391px;width:793px;height:15px;background:#77787b;"></div>
<div style="left:148px;top:406px;width:793px;height:1px;background:#58595b;"></div>
<div style="left:165px;top:394px;font-size:7px;color:#ececec;white-space:nowrap;line-height:10px;">1</div>
<div style="left:187px;top:394px;font-size:7px;color:#ececec;white-space:nowrap;line-height:10px;">/</div>
<div style="left:209px;top:394px;font-size:7px;color:#ececec;white-space:nowrap;line-height:10px;">1</div>
<div style="left:231px;top:394px;font-size:7px;color:#ececec;white-space:nowrap;line-height:10px;">/</div>
<div style="left:249px;top:394px;font-size:7px;color:#ececec;white-space:nowrap;line-height:10px;">120</div>
<svg style="left:274px;top:395px;" width="11" height="8" viewBox="0 0 11 8"><rect x="0.500" y="0.500" width="10" height="7" fill="#e8e8e8" stroke="#555" stroke-width="0.500"/><rect x="1.500" y="2" width="2" height="4" fill="#666"/><rect x="4.500" y="2" width="2" height="4" fill="#666"/><rect x="7.500" y="2" width="2" height="4" fill="#3a70c0"/></svg>
<svg style="left:287px;top:395px;" width="11" height="8" viewBox="0 0 11 8"><rect x="0.500" y="1.500" width="10" height="6" fill="#e8e8e8" stroke="#555" stroke-width="0.500"/><rect x="2" y="3" width="2.500" height="3" fill="#666"/><rect x="6" y="3" width="2.500" height="3" fill="#666"/><path d="M0 0 H3" stroke="#222" stroke-width="1"/></svg>
<svg style="left:306px;top:394px;" width="11" height="11" viewBox="0 0 11 11"><circle cx="4.500" cy="4.500" r="3.600" fill="#f4f4f4" stroke="#333" stroke-width="0.800"/><path d="M7 7 L10 10" stroke="#222" stroke-width="1.600"/><path d="M2.700 4.500 H6.300" stroke="#222" stroke-width="1"/></svg>
<svg style="left:319px;top:394px;" width="11" height="11" viewBox="0 0 11 11"><circle cx="4.500" cy="4.500" r="3.600" fill="#f4f4f4" stroke="#333" stroke-width="0.800"/><path d="M7 7 L10 10" stroke="#222" stroke-width="1.600"/><path d="M2.700 4.500 H6.300" stroke="#222" stroke-width="1"/><path d="M4.500 2.700 V6.300" stroke="#222" stroke-width="1"/></svg>
<svg style="left:338px;top:395px;" width="10" height="9" viewBox="0 0 10 9"><path d="M1.500 1 V8" stroke="#66676a" stroke-width="1.300"/><path d="M8 1 L3 4.500 L8 8 Z" fill="#66676a"/></svg>
<svg style="left:351px;top:395px;" width="10" height="9" viewBox="0 0 10 9"><path d="M5 1 L0.500 4.500 L5 8 Z M5 3 H9 V6 H5 Z" fill="#66676a"/></svg>
<svg style="left:364px;top:395px;" width="8" height="9" viewBox="0 0 8 9"><path d="M1 0.500 L7 4.500 L1 8.500 Z" fill="#1e1e1e"/></svg>
<svg style="left:375px;top:395px;" width="10" height="9" viewBox="0 0 10 9"><path d="M5 1 L9.500 4.500 L5 8 Z M1 3 H5 V6 H1 Z" fill="#1e1e1e"/></svg>
<svg style="left:388px;top:395px;" width="10" height="9" viewBox="0 0 10 9"><path d="M8.500 1 V8" stroke="#1e1e1e" stroke-width="1.300"/><path d="M2 1 L7 4.500 L2 8 Z" fill="#1e1e1e"/></svg>
<div style="left:405px;top:393px;width:13px;height:13px;background:#5c5d60;border-radius:1px"></div>
<svg style="left:407px;top:395px;" width="9" height="9" viewBox="0 0 9 9"><path d="M1.500 4 C1.500 1.500 4 1 6 1.500 L6 0 L8.500 2.500 L6 4.500 L6 3 C4 2.500 3 3.500 3 4.500 Z M7.500 5 C7.500 7.500 5 8 3 7.500 L3 9 L0.500 6.500 L3 4.500 L3 6 C5 6.500 6 5.500 6 4.500 Z" fill="#1e1e1e"/></svg>
<svg style="left:426px;top:395px;" width="10" height="9" viewBox="0 0 10 9"><rect x="0.500" y="1.500" width="9" height="7" fill="#f0e8e8" stroke="#888" stroke-width="0.500"/><path d="M2 0.500 V2.500 M4 0.500 V2.500 M6 0.500 V2.500 M8 0.500 V2.500" stroke="#c04040" stroke-width="0.700"/></svg>
<svg style="left:438px;top:395px;" width="10" height="9" viewBox="0 0 10 9"><rect x="0.500" y="1.500" width="9" height="7" fill="#f0e8e8" stroke="#888" stroke-width="0.500"/><path d="M2 0.500 V2.500 M4 0.500 V2.500 M6 0.500 V2.500 M8 0.500 V2.500" stroke="#c04040" stroke-width="0.700"/></svg>
<svg style="left:450px;top:395px;" width="10" height="9" viewBox="0 0 10 9"><rect x="0.500" y="1.500" width="9" height="7" fill="#f0e8e8" stroke="#888" stroke-width="0.500"/><path d="M2 0.500 V2.500 M4 0.500 V2.500 M6 0.500 V2.500 M8 0.500 V2.500" stroke="#c04040" stroke-width="0.700"/></svg>
<svg style="left:462px;top:395px;" width="10" height="9" viewBox="0 0 10 9"><rect x="0.500" y="1.500" width="9" height="7" fill="#8a8b8e" stroke="#7a7b7e" stroke-width="0.500"/><path d="M2 0.500 V2.500 M4 0.500 V2.500 M6 0.500 V2.500 M8 0.500 V2.500" stroke="#808184" stroke-width="0.700"/></svg>
<div style="left:481px;top:393px;width:12px;height:13px;background:#5c5d60;"></div>
<div style="left:483px;top:395px;width:8px;height:9px;background:#e8e8e8;border:1px solid #999;box-sizing:border-box"></div>
<div style="left:485px;top:397px;width:6px;height:7px;background:#aaa;"></div>
<div style="left:148px;top:407px;width:86px;height:15px;background:linear-gradient(#88898c,#77787b);border:1px solid #5a5b5d;box-sizing:border-box;border-radius:1px"></div>
<div style="left:148px;top:409px;font-size:7.2px;color:#ececec;white-space:nowrap;line-height:10px;width:76px;text-align:center;">Timeline 1</div>
<svg style="left:224px;top:412px;" width="7" height="5" viewBox="0 0 7 5"><path d="M0.500 0.500 H6.500 L3.500 4.500 Z" fill="#2a2a2a"/></svg>
<div style="left:234px;top:407px;width:6px;height:107px;background:#6a6b6e;"></div>
<div style="left:236px;top:407px;width:1px;height:107px;background:#58595b;"></div>
<div style="left:240px;top:407px;width:701px;height:15px;background:#77787b;"></div>
<div style="left:471px;top:407px;width:470px;height:15px;background:#83879a;"></div>
<div style="left:240px;top:407px;width:6px;height:15px;background:#2828c8;"></div>
<div style="left:246px;top:407px;width:8px;height:15px;background:#d04848;"></div>
<div style="left:240px;top:421.5px;width:701px;height:1.5px;background:#56575a;"></div>
<div style="left:240px;top:423px;width:693px;height:83px;background:#666669;"></div>
<svg style="left:240px;top:423px;overflow:visible" width="693" height="83" viewBox="0 0 693 83"><rect x="6.0" y="0" width="1" height="83" fill="#48484a"/><rect x="6.0" y="-10" width="1" height="10" fill="#505154"/><rect x="13.5" y="0" width="1" height="83" fill="#5f5f62"/><rect x="13.5" y="-4" width="1" height="2.500" fill="#b0b1b6"/><rect x="21.0" y="0" width="1" height="83" fill="#5f5f62"/><rect x="21.0" y="-4" width="1" height="2.500" fill="#b0b1b6"/><rect x="28.5" y="0" width="1" height="83" fill="#5f5f62"/><rect x="28.5" y="-4" width="1" height="2.500" fill="#b0b1b6"/><rect x="36.0" y="0" width="1" height="83" fill="#5f5f62"/><rect x="36.0" y="-4" width="1" height="2.500" fill="#b0b1b6"/><rect x="43.5" y="0" width="1" height="83" fill="#5f5f62"/><rect x="43.5" y="-4" width="1" height="2.500" fill="#b0b1b6"/><rect x="51.0" y="0" width="1" height="83" fill="#48484a"/><rect x="51.0" y="-10" width="1" height="10" fill="#505154"/><rect x="58.5" y="0" width="1" height="83" fill="#5f5f62"/><rect x="58.5" y="-4" width="1" height="2.500" fill="#b0b1b6"/><rect x="66.0" y="0" width="1" height="83" fill="#5f5f62"/><rect x="66.0" y="-4" width="1" height="2.500" fill="#b0b1b6"/><rect x="73.5" y="0" width="1" height="83" fill="#5f5f62"/><rect x="73.5" y="-4" width="1" height="2.500" fill="#b0b1b6"/><rect x="81.0" y="0" width="1" height="83" fill="#5f5f62"/><rect x="81.0" y="-4" width="1" height="2.500" fill="#b0b1b6"/><rect x="88.5" y="0" width="1" height="83" fill="#5f5f62"/><rect x="88.5" y="-4" width="1" height="2.500" fill="#b0b1b6"/><rect x="96.0" y="0" width="1" height="83" fill="#48484a"/><rect x="96.0" y="-10" width="1" height="10" fill="#505154"/><rect x="103.5" y="0" width="1" height="83" fill="#5f5f62"/><rect x="103.5" y="-4" width="1" height="2.500" fill="#b0b1b6"/><rect x="111.0" y="0" width="1" height="83" fill="#5f5f62"/><rect x="111.0" y="-4" width="1" height="2.500" fill="#b0b1b6"/><rect x="118.5" y="0" width="1" height="83" fill="#5f5f62"/><rect x="118.5" y="-4" width="1" height="2.500" fill="#b0b1b6"/><rect x="126.0" y="0" width="1" height="83" fill="#5f5f62"/><rect x="126.0" y="-4" width="1" height="2.500" fill="#b0b1b6"/><rect x="133.5" y="0" width="1" height="83" fill="#5f5f62"/><rect x="133.5" y="-4" width="1" height="2.500" fill="#b0b1b6"/><rect x="141.0" y="0" width="1" height="83" fill="#48484a"/><rect x="141.0" y="-10" width="1" height="10" fill="#505154"/><rect x="148.5" y="0" width="1" height="83" fill="#5f5f62"/><rect x="148.5" y="-4" width="1" height="2.500" fill="#b0b1b6"/><rect x="156.0" y="0" width="1" height="83" fill="#5f5f62"/><rect x="156.0" y="-4" width="1" height="2.500" fill="#b0b1b6"/><rect x="163.5" y="0" width="1" height="83" fill="#5f5f62"/><rect x="163.5" y="-4" width="1" height="2.500" fill="#b0b1b6"/><rect x="171.0" y="0" width="1" height="83" fill="#5f5f62"/><rect x="171.0" y="-4" width="1" height="2.500" fill="#b0b1b6"/><rect x="178.5" y="0" width="1" height="83" fill="#5f5f62"/><rect x="178.5" y="-4" width="1" height="2.500" fill="#b0b1b6"/><rect x="186.0" y="0" width="1" height="83" fill="#48484a"/><rect x="186.0" y="-10" width="1" height="10" fill="#505154"/><rect x="193.5" y="0" width="1" height="83" fill="#5f5f62"/><rect x="193.5" y="-4" width="1" height="2.500" fill="#b0b1b6"/><rect x="201.0" y="0" width="1" height="83" fill="#5f5f62"/><rect x="201.0" y="-4" width="1" height="2.500" fill="#b0b1b6"/><rect x="208.5" y="0" width="1" height="83" fill="#5f5f62"/><rect x="208.5" y="-4" width="1" height="2.500" fill="#b0b1b6"/><rect x="216.0" y="0" width="1" height="83" fill="#5f5f62"/><rect x="216.0" y="-4" width="1" height="2.500" fill="#b0b1b6"/><rect x="223.5" y="0" width="1" height="83" fill="#5f5f62"/><rect x="223.5" y="-4" width="1" height="2.500" fill="#b0b1b6"/><rect x="231.0" y="0" width="1" height="83" fill="#48484a"/><rect x="231.0" y="-10" width="1" height="10" fill="#505154"/><rect x="238.5" y="0" width="1" height="83" fill="#5f5f62"/><rect x="238.5" y="-4" width="1" height="2.500" fill="#b0b1b6"/><rect x="246.0" y="0" width="1" height="83" fill="#5f5f62"/><rect x="246.0" y="-4" width="1" height="2.500" fill="#b0b1b6"/><rect x="253.5" y="0" width="1" height="83" fill="#5f5f62"/><rect x="253.5" y="-4" width="1" height="2.500" fill="#b0b1b6"/><rect x="261.0" y="0" width="1" height="83" fill="#5f5f62"/><rect x="261.0" y="-4" width="1" height="2.500" fill="#b0b1b6"/><rect x="268.5" y="0" width="1" height="83" fill="#5f5f62"/><rect x="268.5" y="-4" width="1" height="2.500" fill="#b0b1b6"/><rect x="276.0" y="0" width="1" height="83" fill="#48484a"/><rect x="276.0" y="-10" width="1" height="10" fill="#505154"/><rect x="283.5" y="0" width="1" height="83" fill="#5f5f62"/><rect x="283.5" y="-4" width="1" height="2.500" fill="#b0b1b6"/><rect x="291.0" y="0" width="1" height="83" fill="#5f5f62"/><rect x="291.0" y="-4" width="1" height="2.500" fill="#b0b1b6"/><rect x="298.5" y="0" width="1" height="83" fill="#5f5f62"/><rect x="298.5" y="-4" width="1" height="2.500" fill="#b0b1b6"/><rect x="306.0" y="0" width="1" height="83" fill="#5f5f62"/><rect x="306.0" y="-4" width="1" height="2.500" fill="#b0b1b6"/><rect x="313.5" y="0" width="1" height="83" fill="#5f5f62"/><rect x="313.5" y="-4" width="1" height="2.500" fill="#b0b1b6"/><rect x="321.0" y="0" width="1" height="83" fill="#48484a"/><rect x="321.0" y="-10" width="1" height="10" fill="#505154"/><rect x="328.5" y="0" width="1" height="83" fill="#5f5f62"/><rect x="328.5" y="-4" width="1" height="2.500" fill="#b0b1b6"/><rect x="336.0" y="0" width="1" height="83" fill="#5f5f62"/><rect x="336.0" y="-4" width="1" height="2.500" fill="#b0b1b6"/><rect x="343.5" y="0" width="1" height="83" fill="#5f5f62"/><rect x="343.5" y="-4" width="1" height="2.500" fill="#b0b1b6"/><rect x="351.0" y="0" width="1" height="83" fill="#5f5f62"/><rect x="351.0" y="-4" width="1" height="2.500" fill="#b0b1b6"/><rect x="358.5" y="0" width="1" height="83" fill="#5f5f62"/><rect x="358.5" y="-4" width="1" height="2.500" fill="#b0b1b6"/><rect x="366.0" y="0" width="1" height="83" fill="#48484a"/><rect x="366.0" y="-10" width="1" height="10" fill="#505154"/><rect x="373.5" y="0" width="1" height="83" fill="#5f5f62"/><rect x="373.5" y="-4" width="1" height="2.500" fill="#b0b1b6"/><rect x="381.0" y="0" width="1" height="83" fill="#5f5f62"/><rect x="381.0" y="-4" width="1" height="2.500" fill="#b0b1b6"/><rect x="388.5" y="0" width="1" height="83" fill="#5f5f62"/><rect x="388.5" y="-4" width="1" height="2.500" fill="#b0b1b6"/><rect x="396.0" y="0" width="1" height="83" fill="#5f5f62"/><rect x="396.0" y="-4" width="1" height="2.500" fill="#b0b1b6"/><rect x="403.5" y="0" width="1" height="83" fill="#5f5f62"/><rect x="403.5" y="-4" width="1" height="2.500" fill="#b0b1b6"/><rect x="411.0" y="0" width="1" height="83" fill="#48484a"/><rect x="411.0" y="-10" width="1" height="10" fill="#505154"/><rect x="418.5" y="0" width="1" height="83" fill="#5f5f62"/><rect x="418.5" y="-4" width="1" height="2.500" fill="#b0b1b6"/><rect x="426.0" y="0" width="1" height="83" fill="#5f5f62"/><rect x="426.0" y="-4" width="1" height="2.500" fill="#b0b1b6"/><rect x="433.5" y="0" width="1" height="83" fill="#5f5f62"/><rect x="433.5" y="-4" width="1" height="2.500" fill="#b0b1b6"/><rect x="441.0" y="0" width="1" height="83" fill="#5f5f62"/><rect x="441.0" y="-4" width="1" height="2.500" fill="#b0b1b6"/><rect x="448.5" y="0" width="1" height="83" fill="#5f5f62"/><rect x="448.5" y="-4" width="1" height="2.500" fill="#b0b1b6"/><rect x="456.0" y="0" width="1" height="83" fill="#48484a"/><rect x="456.0" y="-10" width="1" height="10" fill="#505154"/><rect x="463.5" y="0" width="1" height="83" fill="#5f5f62"/><rect x="463.5" y="-4" width="1" height="2.500" fill="#b0b1b6"/><rect x="471.0" y="0" width="1" height="83" fill="#5f5f62"/><rect x="471.0" y="-4" width="1" height="2.500" fill="#b0b1b6"/><rect x="478.5" y="0" width="1" height="83" fill="#5f5f62"/><rect x="478.5" y="-4" width="1" height="2.500" fill="#b0b1b6"/><rect x="486.0" y="0" width="1" height="83" fill="#5f5f62"/><rect x="486.0" y="-4" width="1" height="2.500" fill="#b0b1b6"/><rect x="493.5" y="0" width="1" height="83" fill="#5f5f62"/><rect x="493.5" y="-4" width="1" height="2.500" fill="#b0b1b6"/><rect x="501.0" y="0" width="1" height="83" fill="#48484a"/><rect x="501.0" y="-10" width="1" height="10" fill="#505154"/><rect x="508.5" y="0" width="1" height="83" fill="#5f5f62"/><rect x="508.5" y="-4" width="1" height="2.500" fill="#b0b1b6"/><rect x="516.0" y="0" width="1" height="83" fill="#5f5f62"/><rect x="516.0" y="-4" width="1" height="2.500" fill="#b0b1b6"/><rect x="523.5" y="0" width="1" height="83" fill="#5f5f62"/><rect x="523.5" y="-4" width="1" height="2.500" fill="#b0b1b6"/><rect x="531.0" y="0" width="1" height="83" fill="#5f5f62"/><rect x="531.0" y="-4" width="1" height="2.500" fill="#b0b1b6"/><rect x="538.5" y="0" width="1" height="83" fill="#5f5f62"/><rect x="538.5" y="-4" width="1" height="2.500" fill="#b0b1b6"/><rect x="546.0" y="0" width="1" height="83" fill="#48484a"/><rect x="546.0" y="-10" width="1" height="10" fill="#505154"/><rect x="553.5" y="0" width="1" height="83" fill="#5f5f62"/><rect x="553.5" y="-4" width="1" height="2.500" fill="#b0b1b6"/><rect x="561.0" y="0" width="1" height="83" fill="#5f5f62"/><rect x="561.0" y="-4" width="1" height="2.500" fill="#b0b1b6"/><rect x="568.5" y="0" width="1" height="83" fill="#5f5f62"/><rect x="568.5" y="-4" width="1" height="2.500" fill="#b0b1b6"/><rect x="576.0" y="0" width="1" height="83" fill="#5f5f62"/><rect x="576.0" y="-4" width="1" height="2.500" fill="#b0b1b6"/><rect x="583.5" y="0" width="1" height="83" fill="#5f5f62"/><rect x="583.5" y="-4" width="1" height="2.500" fill="#b0b1b6"/><rect x="591.0" y="0" width="1" height="83" fill="#48484a"/><rect x="591.0" y="-10" width="1" height="10" fill="#505154"/><rect x="598.5" y="0" width="1" height="83" fill="#5f5f62"/><rect x="598.5" y="-4" width="1" height="2.500" fill="#b0b1b6"/><rect x="606.0" y="0" width="1" height="83" fill="#5f5f62"/><rect x="606.0" y="-4" width="1" height="2.500" fill="#b0b1b6"/><rect x="613.5" y="0" width="1" height="83" fill="#5f5f62"/><rect x="613.5" y="-4" width="1" height="2.500" fill="#b0b1b6"/><rect x="621.0" y="0" width="1" height="83" fill="#5f5f62"/><rect x="621.0" y="-4" width="1" height="2.500" fill="#b0b1b6"/><rect x="628.5" y="0" width="1" height="83" fill="#5f5f62"/><rect x="628.5" y="-4" width="1" height="2.500" fill="#b0b1b6"/><rect x="636.0" y="0" width="1" height="83" fill="#48484a"/><rect x="636.0" y="-10" width="1" height="10" fill="#505154"/><rect x="643.5" y="0" width="1" height="83" fill="#5f5f62"/><rect x="643.5" y="-4" width="1" height="2.500" fill="#b0b1b6"/><rect x="651.0" y="0" width="1" height="83" fill="#5f5f62"/><rect x="651.0" y="-4" width="1" height="2.500" fill="#b0b1b6"/><rect x="658.5" y="0" width="1" height="83" fill="#5f5f62"/><rect x="658.5" y="-4" width="1" height="2.500" fill="#b0b1b6"/><rect x="666.0" y="0" width="1" height="83" fill="#5f5f62"/><rect x="666.0" y="-4" width="1" height="2.500" fill="#b0b1b6"/><rect x="673.5" y="0" width="1" height="83" fill="#5f5f62"/><rect x="673.5" y="-4" width="1" height="2.500" fill="#b0b1b6"/><rect x="681.0" y="0" width="1" height="83" fill="#48484a"/><rect x="681.0" y="-10" width="1" height="10" fill="#505154"/><rect x="688.5" y="0" width="1" height="83" fill="#5f5f62"/><rect x="688.5" y="-4" width="1" height="2.500" fill="#b0b1b6"/></svg>
<div style="left:268.5px;top:414px;font-size:6.6px;color:#f0f0f0;white-space:nowrap;line-height:9px;">4</div>
<div style="left:291.5px;top:414px;font-size:6.6px;color:#f0f0f0;white-space:nowrap;line-height:9px;">7</div>
<div style="left:314.5px;top:414px;font-size:6.6px;color:#f0f0f0;white-space:nowrap;line-height:9px;">10</div>
<div style="left:336.5px;top:414px;font-size:6.6px;color:#f0f0f0;white-space:nowrap;line-height:9px;">13</div>
<div style="left:358.5px;top:414px;font-size:6.6px;color:#f0f0f0;white-space:nowrap;line-height:9px;">16</div>
<div style="left:381.5px;top:414px;font-size:6.6px;color:#f0f0f0;white-space:nowrap;line-height:9px;">19</div>
<div style="left:404.5px;top:414px;font-size:6.6px;color:#f0f0f0;white-space:nowrap;line-height:9px;">22</div>
<div style="left:426.5px;top:414px;font-size:6.6px;color:#f0f0f0;white-space:nowrap;line-height:9px;">25</div>
<div style="left:448.5px;top:414px;font-size:6.6px;color:#f0f0f0;white-space:nowrap;line-height:9px;">28</div>
<div style="left:471.5px;top:414px;font-size:6.6px;color:#f0f0f0;white-space:nowrap;line-height:9px;">31</div>
<div style="left:494.5px;top:414px;font-size:6.6px;color:#f0f0f0;white-space:nowrap;line-height:9px;">34</div>
<div style="left:516.5px;top:414px;font-size:6.6px;color:#f0f0f0;white-space:nowrap;line-height:9px;">37</div>
<div style="left:538.5px;top:414px;font-size:6.6px;color:#f0f0f0;white-space:nowrap;line-height:9px;">40</div>
<div style="left:561.5px;top:414px;font-size:6.6px;color:#f0f0f0;white-space:nowrap;line-height:9px;">43</div>
<div style="left:584.5px;top:414px;font-size:6.6px;color:#f0f0f0;white-space:nowrap;line-height:9px;">46</div>
<div style="left:606.5px;top:414px;font-size:6.6px;color:#f0f0f0;white-space:nowrap;line-height:9px;">49</div>
<div style="left:628.5px;top:414px;font-size:6.6px;color:#f0f0f0;white-space:nowrap;line-height:9px;">52</div>
<div style="left:651.5px;top:414px;font-size:6.6px;color:#f0f0f0;white-space:nowrap;line-height:9px;">55</div>
<div style="left:674.5px;top:414px;font-size:6.6px;color:#f0f0f0;white-space:nowrap;line-height:9px;">58</div>
<div style="left:696.5px;top:414px;font-size:6.6px;color:#f0f0f0;white-space:nowrap;line-height:9px;">61</div>
<div style="left:718.5px;top:414px;font-size:6.6px;color:#f0f0f0;white-space:nowrap;line-height:9px;">64</div>
<div style="left:741.5px;top:414px;font-size:6.6px;color:#f0f0f0;white-space:nowrap;line-height:9px;">67</div>
<div style="left:764.5px;top:414px;font-size:6.6px;color:#f0f0f0;white-space:nowrap;line-height:9px;">70</div>
<div style="left:786.5px;top:414px;font-size:6.6px;color:#f0f0f0;white-space:nowrap;line-height:9px;">73</div>
<div style="left:808.5px;top:414px;font-size:6.6px;color:#f0f0f0;white-space:nowrap;line-height:9px;">76</div>
<div style="left:831.5px;top:414px;font-size:6.6px;color:#f0f0f0;white-space:nowrap;line-height:9px;">79</div>
<div style="left:854.5px;top:414px;font-size:6.6px;color:#f0f0f0;white-space:nowrap;line-height:9px;">82</div>
<div style="left:876.5px;top:414px;font-size:6.6px;color:#f0f0f0;white-space:nowrap;line-height:9px;">85</div>
<div style="left:898.5px;top:414px;font-size:6.6px;color:#f0f0f0;white-space:nowrap;line-height:9px;">88</div>
<div style="left:921.5px;top:414px;font-size:6.6px;color:#f0f0f0;white-space:nowrap;line-height:9px;">91</div>
<div style="left:248px;top:408px;font-size:6px;color:#fff;white-space:nowrap;line-height:7px;">1</div>
<div style="left:473.5px;top:406.5px;font-size:6.4px;color:#f0f0f0;white-space:nowrap;line-height:8px;">1</div>
<div style="left:698.5px;top:406.5px;font-size:6.4px;color:#f0f0f0;white-space:nowrap;line-height:8px;">2</div>
<div style="left:923.5px;top:406.5px;font-size:6.4px;color:#f0f0f0;white-space:nowrap;line-height:8px;">3</div>
<div style="left:240px;top:423px;width:693px;height:1px;background:#4a4a4c;"></div>
<div style="left:240px;top:427px;width:693px;height:1px;background:#555558;"></div>
<div style="left:240px;top:483px;width:693px;height:2px;background:#4a4a4c;"></div>
<div style="left:240px;top:488px;width:693px;height:1px;background:#555558;"></div>
<div style="left:246px;top:423px;width:8px;height:83px;background:rgba(180,50,50,0.5);"></div>
<div style="left:245px;top:423px;width:1px;height:83px;background:#3030c0;"></div>
<div style="left:248px;top:428px;font-size:6.6px;color:#ffffff;white-space:nowrap;line-height:9px;font-weight:bold">1</div>
<div style="left:247px;top:440px;width:32px;height:24px;background:#ffffff;"></div>
<svg style="left:247px;top:440px;" width="32" height="24" viewBox="0 0 32 24"><g fill="none" stroke="#aaa" stroke-width="0.400"><path d="M6 14 L12 14.500 M9 15 C8 16 9 18 11 17 M8 18 H12 V21 H8 Z M14 16 L18 19 M18 17 C20 15 22 15 23 15 M19 20 C19 23 22 23 22 20 M24 16 H28"/></g></svg>
<div style="left:247px;top:501px;width:32px;height:5px;background:#ffffff;"></div>
<div style="left:148px;top:423px;width:86px;height:61px;background:#7b7c7f;"></div>
<div style="left:148px;top:422px;width:86px;height:1px;background:#58595b;"></div>
<div style="left:148px;top:484px;width:86px;height:1px;background:#58595b;"></div>
<div style="left:148px;top:485px;width:86px;height:29px;background:#7b7c7f;"></div>
<div style="left:161px;top:423px;width:1px;height:91px;background:#606164;"></div>
<svg style="left:150px;top:428px;" width="9" height="6" viewBox="0 0 9 6"><path d="M0.500 3 C2.500 0 6.500 0 8.500 3 C6.500 6 2.500 6 0.500 3 Z" fill="#f0f0f0" stroke="#1a1a1a" stroke-width="0.700"/><circle cx="4.500" cy="3" r="1.900" fill="#1a1a1a"/></svg>
<svg style="left:150px;top:490px;" width="9" height="6" viewBox="0 0 9 6"><path d="M0.500 3 C2.500 0 6.500 0 8.500 3 C6.500 6 2.500 6 0.500 3 Z" fill="#f0f0f0" stroke="#1a1a1a" stroke-width="0.700"/><circle cx="4.500" cy="3" r="1.900" fill="#1a1a1a"/></svg>
<svg style="left:165px;top:426px;" width="10" height="9" viewBox="0 0 10 9"><rect x="0.500" y="1.500" width="9" height="7" fill="#f0e8e8" stroke="#888" stroke-width="0.500"/><path d="M2 0.500 V2.500 M4 0.500 V2.500 M6 0.500 V2.500 M8 0.500 V2.500" stroke="#c04040" stroke-width="0.700"/></svg>
<div style="left:178px;top:427px;font-size:7px;color:#ececec;white-space:nowrap;line-height:10px;">Folder 1 : 2</div>
<div style="left:162px;top:439px;width:72px;height:1px;background:#606164;"></div>
<div style="left:162px;top:440px;width:31px;height:24px;background:#ffffff;"></div>
<svg style="left:162px;top:440px;" width="31" height="24" viewBox="0 0 31 24"><g fill="none" stroke="#aaa" stroke-width="0.400"><path d="M6 14 L12 14.500 M9 15 C8 16 9 18 11 17 M8 18 H12 V21 H8 Z M14 16 L18 19 M18 17 C20 15 22 15 23 15 M19 20 C19 23 22 23 22 20 M24 16 H28"/></g></svg>
<div style="left:194px;top:440px;width:32px;height:24px;background:#e8e8e8;"></div>
<svg style="left:194px;top:440px;" width="32" height="24" viewBox="0 0 32 24"><rect width="32" height="24" fill="#f0f0f0"/><path d="M0 6 L8 2 L20 4 L32 12 V24 H0 Z" fill="#2c2c2e"/><path d="M6 3 C14 3 22 6 30 10" stroke="#c83020" stroke-width="1" fill="none"/><path d="M8 10 L14 24 M4 12 L4 24" stroke="#aaa" stroke-width="1.500"/><circle cx="22" cy="18" r="5" fill="#555"/><path d="M0 14 C4 14 8 18 8 24" stroke="#888" stroke-width="1.200" fill="none"/></svg>
<div style="left:162px;top:464px;width:31px;height:11px;background:linear-gradient(#8ba4b4,#6e8a9c);border:0.500px solid #50687a;box-sizing:border-box"></div>
<div style="left:163px;top:465px;font-size:6.8px;color:#f4f4f4;white-space:nowrap;line-height:9px;">1</div>
<div style="left:194px;top:464px;width:32px;height:11px;background:#7e7f82;border:0.500px solid #606164;box-sizing:border-box"></div>
<div style="left:195px;top:465px;font-size:6.8px;color:#ececec;white-space:nowrap;line-height:9px;">props</div>
<div style="left:227px;top:440px;width:1px;height:35px;background:#606164;"></div>
<div style="left:162px;top:476px;width:72px;height:7px;background:#737477;"></div>
<div style="left:162px;top:476px;width:72px;height:1px;background:#606164;"></div>
<svg style="left:165px;top:488px;" width="9" height="11" viewBox="0 0 9 11"><path d="M0.500 0.500 H5.500 L8.500 3.500 V10.500 H0.500 Z" fill="#f6f6f6" stroke="#555" stroke-width="0.500"/><path d="M5.500 0.500 V3.500 H8.500" fill="#ccc" stroke="#555" stroke-width="0.500"/></svg>
<div style="left:178px;top:488px;font-size:7px;color:#ececec;white-space:nowrap;line-height:10px;">Paper</div>
<div style="left:162px;top:501px;width:32px;height:13px;background:#ffffff;"></div>
<svg style="left:139px;top:490px;" width="7" height="5" viewBox="0 0 7 5"><path d="M0.500 1 L3.500 4 L6.500 1" fill="none" stroke="#ccc" stroke-width="1"/></svg>
<svg style="left:139px;top:502px;" width="7" height="9" viewBox="0 0 7 9"><path d="M0.500 1 L3.500 4 L6.500 1 M0.500 5 L3.500 8 L6.500 5" fill="none" stroke="#ccc" stroke-width="1"/></svg>
<svg style="left:139px;top:502px;" width="7" height="9" viewBox="0 0 7 9"><path d="M0.500 1 L3.500 4 L6.500 1 M0.500 5 L3.500 8 L6.500 5" fill="none" stroke="#ccc" stroke-width="1"/></svg>
<div style="left:236px;top:506px;width:697px;height:8px;background:#77787b;"></div>
<div style="left:236px;top:506px;width:7px;height:8px;background:#8a8b8e;"></div>
<svg style="left:237px;top:508px;" width="5" height="5" viewBox="0 0 5 5"><path d="M4 0.500 L1 2.500 L4 4.500 Z" fill="#222"/></svg>
<div style="left:296px;top:507px;width:412px;height:6px;background:#8c8d90;"></div>
<div style="left:500px;top:509px;width:5px;height:2px;background:#666;"></div>
<div style="left:924px;top:506px;width:9px;height:8px;background:#8a8b8e;"></div>
<svg style="left:926px;top:508px;" width="5" height="5" viewBox="0 0 5 5"><path d="M1 0.500 L4 2.500 L1 4.500 Z" fill="#222"/></svg>
<div style="left:933px;top:423px;width:8px;height:83px;background:#707174;"></div>
<div style="left:933px;top:423px;width:8px;height:7px;background:#8a8b8e;"></div>
<svg style="left:935px;top:425px;" width="5" height="4" viewBox="0 0 5 4"><path d="M2.500 0.500 L4.500 3.500 H0.500 Z" fill="#222"/></svg>
<div style="left:933px;top:430px;width:8px;height:58px;background:#8c8d90;"></div>
<div style="left:935px;top:455px;width:4px;height:3px;background:#666;"></div>
<div style="left:933px;top:498px;width:8px;height:8px;background:#8a8b8e;"></div>
<svg style="left:935px;top:500px;" width="5" height="4" viewBox="0 0 5 4"><path d="M2.500 3.500 L4.500 0.500 H0.500 Z" fill="#222"/></svg>
<div style="left:0px;top:514px;width:960px;height:26px;background:linear-gradient(90deg,#3a3228 0,#2a2622 180px,#1c1c24 260px,#262424 420px,#2a2826 620px,#34322a 800px,#3a382c 960px);"></div>
<svg style="left:10px;top:521.5px;" width="11" height="11" viewBox="0 0 11 11"><path d="M0 1.600 L4.800 0.900 V5.200 H0 Z M5.600 0.800 L11 0 V5.200 H5.600 Z M0 5.900 H4.800 V10.200 L0 9.500 Z M5.600 5.900 H11 V11 L5.600 10.200 Z" fill="#ffffff"/></svg>
<div style="left:30px;top:515px;width:180px;height:25px;background:#f3f3f3;"></div>
<svg style="left:37px;top:522px;" width="11" height="12" viewBox="0 0 11 12"><circle cx="6.500" cy="4.500" r="3.300" fill="none" stroke="#333" stroke-width="1.100"/><path d="M4.200 7 L0.800 11" stroke="#333" stroke-width="1.200"/></svg>
<div style="left:55px;top:521.5px;font-size:9.4px;color:#4a4a4a;white-space:nowrap;line-height:14px;">Type here to search</div>
<svg style="left:160px;top:515px;" width="50" height="25" viewBox="0 0 50 25">
<g transform="translate(-10,-3)">
<path d="M13 3 L22 14 L29 19 M22.600 3.500 L24 11 M41.600 25 L47 17 L52.600 11 L53.300 6 M48.200 11.500 L49 6.500" fill="none" stroke="#b89080" stroke-width="1.300"/>
<path d="M24 28 L28 25 L32 22 L36 26 L37 28" fill="none" stroke="#9a6a3a" stroke-width="2.600"/>
<path d="M16 9.500 L21 11.500 L17.500 13 Z M19 20 L22 25.500 L20 26 Z M53 8.500 L58 9 L54 10.500 Z M47.500 17 L53.500 17.500 L49 19 Z M49 5.500 L51 7 L49.300 8 Z" fill="#9cc044"/>
<path d="M28.500 12 C32 10 38 10 42 14 C45 17 45 24 42 28 L30 28 C27 24 27 16 28.500 12 Z" fill="#26323e"/>
<path d="M40.500 13 C43 15 44.500 19 43.500 23 L41.500 26 C42 21 42 17 40.500 13 Z" fill="#f0f0f0"/>
<path d="M22 14.500 L29 13 L30 18 L24 19 Z" fill="#2a3846"/>
<path d="M33 21 L40 17 L41 28 L34 28 Z" fill="#1e2832"/>
<circle cx="30.300" cy="9.200" r="4.200" fill="#f4f2ec"/>
<circle cx="26" cy="6.500" r="1.500" fill="#1a222c"/><circle cx="34" cy="5.600" r="1.600" fill="#1a222c"/>
<ellipse cx="28.300" cy="9" rx="1" ry="1.400" fill="#26323e"/><ellipse cx="32" cy="8.500" rx="1" ry="1.400" fill="#26323e"/>
<ellipse cx="30" cy="11.300" rx="1" ry="0.700" fill="#4a5a6a"/>
</g></svg>
<svg style="left:219px;top:521px;" width="13" height="12" viewBox="0 0 13 12"><rect x="2" y="2" width="7" height="8" fill="none" stroke="#e0e0e0" stroke-width="1"/><path d="M0 2 H2 M0 10 H2 M9 2 H11 M9 10 H11" stroke="#e0e0e0" stroke-width="1"/><path d="M12.500 1 V11" stroke="#e0e0e0" stroke-width="1"/><rect x="11.800" y="4" width="1.400" height="2" fill="#e0e0e0"/></svg>
<svg style="left:248px;top:519px;" width="16" height="16" viewBox="0 0 16 16"><defs><linearGradient id="eg" x1="0" y1="0" x2="1" y2="1"><stop offset="0" stop-color="#35c1f1"/><stop offset="0.500" stop-color="#1b9de2"/><stop offset="1" stop-color="#0c59a4"/></linearGradient></defs><circle cx="8" cy="8" r="7.500" fill="url(#eg)"/><path d="M3 11 C2 6 6 3.500 9.500 4.500 C13 5.500 13.500 9 11.500 9.800 C10 10 9.500 9 10 8 C8 6.500 5 8 6 11 C7 14 11 14.500 13.500 12 C11 16 4 15 3 11 Z" fill="#0c59a4" opacity="0.550"/><path d="M1 7 C3 1.500 11 0 14.500 5 C12 2.500 4 3 3.500 9 Z" fill="#5fd068"/></svg>
<svg style="left:281px;top:520px;" width="15" height="15" viewBox="0 0 15 15"><rect x="0" y="0" width="15" height="14.500" rx="2" fill="#001e36"/><text x="7.500" y="10.600" font-size="8.600" font-weight="bold" font-family="Liberation Sans, sans-serif" fill="#31a8ff" text-anchor="middle">Ps</text></svg>
<svg style="left:311px;top:520px;" width="16" height="15" viewBox="0 0 16 15"><path d="M0.500 6 L8 0.500 L15.500 6 V14 H0.500 Z" fill="#1a72c8"/><path d="M0.500 6 L8 11 L15.500 6 V14 H0.500 Z" fill="#38a0ec"/><path d="M0.500 14 L8 9.500 L15.500 14 Z" fill="#1e80d8"/></svg>
<svg style="left:343px;top:519px;" width="15" height="16" viewBox="0 0 15 16"><path d="M4.500 4 V2.500 C4.500 0.500 10.500 0.500 10.500 2.500 V4" fill="none" stroke="#38a8e8" stroke-width="1.100"/><rect x="0.500" y="4" width="14" height="11.500" rx="1.500" fill="#f4f4f4"/><rect x="4" y="6.500" width="3" height="3" fill="#f25022"/><rect x="8" y="6.500" width="3" height="3" fill="#7fba00"/><rect x="4" y="10.500" width="3" height="3" fill="#00a4ef"/><rect x="8" y="10.500" width="3" height="3" fill="#ffb900"/></svg>
<svg style="left:373px;top:519px;" width="17" height="17" viewBox="0 0 17 17"><circle cx="7.500" cy="7.500" r="7.200" fill="#e8402c"/><path d="M7.500 7.500 L1.300 3.800 A7.200 7.200 0 0 0 7.500 14.700 Z" fill="#2da94f"/><path d="M7.500 7.500 L7.500 14.700 A7.200 7.200 0 0 0 14 4.500 Z" fill="#fdbd00"/><circle cx="7.500" cy="7.500" r="3.300" fill="#fff"/><circle cx="7.500" cy="7.500" r="2.600" fill="#3b7ded"/><circle cx="12" cy="12" r="4.500" fill="#3a3060"/><path d="M9.500 10 L14 14 M11 9 L14.500 12" stroke="#d8a8b8" stroke-width="1"/></svg>
<svg style="left:404px;top:520px;" width="16" height="14" viewBox="0 0 16 14"><path d="M0.500 1 H6 L7.500 2.500 H15.500 V13 H0.500 Z" fill="#e8a820"/><path d="M0.500 4 H15.500 V13 H0.500 Z" fill="#fcd462"/><rect x="3" y="8" width="10" height="5" fill="#3a98e0"/><rect x="5.500" y="10" width="5" height="3" fill="#fcd462"/></svg>
<svg style="left:435px;top:519px;" width="18" height="18" viewBox="0 0 18 18"><circle cx="8" cy="8" r="7.500" fill="#5865f2"/><path d="M4 5.500 C6.500 4.300 9.500 4.300 12 5.500 C13 7.500 13.300 9.500 13 11 C12 11.800 11 12 10.500 12 L10 11 C9 11.400 7 11.400 6 11 L5.500 12 C5 12 4 11.800 3 11 C2.700 9.500 3 7.500 4 5.500 Z" fill="#fff"/><ellipse cx="6.300" cy="8.800" rx="1" ry="1.200" fill="#5865f2"/><ellipse cx="9.700" cy="8.800" rx="1" ry="1.200" fill="#5865f2"/><circle cx="13.500" cy="13.500" r="3.600" fill="#f23f43" stroke="#fff" stroke-width="0"/><circle cx="13.500" cy="13.500" r="1.500" fill="#fff"/></svg>
<div style="left:459px;top:515px;width:30px;height:25px;background:#4c4a46;"></div>
<div style="left:467px;top:520px;width:14px;height:14px;background:#f0f0f0;border-radius:1px"></div>
<svg style="left:467px;top:520px;" width="14" height="14" viewBox="0 0 14 14"><path d="M7.500 7 C6 6 5.500 8.500 7.500 8.600 C10.500 8.600 11 4.500 7 4.300 C2.500 4.300 2.500 9.800 6.500 10 C8 10 8.500 11 8 12" fill="none" stroke="#1a1a1a" stroke-width="1.500" stroke-linecap="round"/></svg>
<svg style="left:498px;top:520px;" width="15" height="15" viewBox="0 0 15 15"><circle cx="7.500" cy="7.500" r="7.300" fill="#1d9bf0"/><path d="M3.500 10.500 C7 12 11 10 11 6 L12 5 L10.800 5.200 C10 4 8 4.200 7.800 6 C6 6 5 5 4 4.200 C3.500 6 4 7 5 7.600 L4 7.400 C4 8.500 5 9.200 5.800 9.400 C5 10.200 4.200 10.400 3.500 10.500 Z" fill="#fff"/></svg>
<svg style="left:528px;top:519px;" width="17" height="16" viewBox="0 0 17 16"><path d="M4 1.500 L14 0.500 L13 13.500 L2 14.500 Z" fill="#a8d4f0"/><path d="M4 1.500 L14 0.500 L13.700 4 L3.600 5 Z" fill="#6aa8d8"/><path d="M2 14.500 L13 13.500 L13 15 L2.500 15.800 Z" fill="#e8e8e8"/><path d="M5 7 L12 6.300 M4.800 9 L11.800 8.300 M4.600 11 L11.600 10.300" stroke="#7aa8c8" stroke-width="0.600"/></svg>
<svg style="left:558px;top:520px;" width="20" height="17" viewBox="0 0 20 17"><rect x="1" y="0.500" width="15" height="11" rx="2.500" fill="#f00000"/><path d="M1 7 H8 V13 H3 Z" fill="#d00000"/><circle cx="13" cy="11.500" r="4.800" fill="#3a3060"/><path d="M10.500 9.500 L15 13.500 M12 8.500 L15.500 11.500" stroke="#d8a8b8" stroke-width="1"/></svg>
<div style="left:368px;top:538px;width:26px;height:2px;background:#8cc8f0;"></div>
<div style="left:398px;top:538px;width:26px;height:2px;background:#8cc8f0;"></div>
<div style="left:429px;top:538px;width:26px;height:2px;background:#8cc8f0;"></div>
<div style="left:459px;top:538px;width:30px;height:2px;background:#8cc8f0;"></div>
<div style="left:553px;top:538px;width:26px;height:2px;background:#8cc8f0;"></div>
<svg style="left:670px;top:519px;" width="24" height="20" viewBox="0 0 24 20"><circle cx="10" cy="8" r="6" fill="#f8a030"/><circle cx="16" cy="3" r="2" fill="#e03020"/><path d="M4 18 C0.500 18 0.500 13 4.500 13 C5 9.500 11 9.500 12 12.500 C16 12 17 18 13 18 Z" fill="#c8dcec"/><path d="M4 18 C0.500 18 0.500 13 4.500 13 C5 11 8 10.500 9.500 11.500 C6 13 8 18 13 18 Z" fill="#e4eef6"/></svg>
<div style="left:689.5px;top:520px;font-size:9px;color:#f0f0f0;white-space:nowrap;line-height:14px;letter-spacing:-0.19px">25°C&nbsp; Sebagian cerah</div>
<svg style="left:790px;top:523px;" width="11" height="9" viewBox="0 0 11 9"><path d="M1 7 L5.500 2.500 L10 7" fill="none" stroke="#f0f0f0" stroke-width="1.100"/></svg>
<svg style="left:804px;top:521px;" width="11" height="12" viewBox="0 0 11 12"><path d="M2 11 C2 6 5 3 10 3 M4.500 11 C4.500 8 6.500 5.500 10 5.500 M7 11 C7 9.500 8 8 10 8" fill="none" stroke="#c8c8c8" stroke-width="1"/><circle cx="9.300" cy="10.300" r="1" fill="#c8c8c8"/></svg>
<svg style="left:819px;top:520px;" width="11" height="13" viewBox="0 0 11 13"><rect x="1.500" y="3" width="6.500" height="6" rx="1" fill="none" stroke="#e0e0e0" stroke-width="0.900"/><path d="M8 5 L10.500 4 V8 L8 7 M3 1 H6.500 M3 11.500 H6.500 M4.800 9 V11.500" stroke="#e0e0e0" stroke-width="0.900" fill="none"/></svg>
<svg style="left:833px;top:521px;" width="12" height="11" viewBox="0 0 12 11"><path d="M0.500 3.500 H2.500 L5 1 V10 L2.500 7.500 H0.500 Z" fill="none" stroke="#e0e0e0" stroke-width="0.800"/><path d="M6.500 3.500 C7.500 4.500 7.500 6.500 6.500 7.500 M8 2.200 C10 4 10 7 8 8.800 M9.500 1 C12.500 3.500 12.500 7.500 9.500 10" fill="none" stroke="#e0e0e0" stroke-width="0.800"/></svg>
<svg style="left:847px;top:523px;" width="13" height="8" viewBox="0 0 13 8"><rect x="1" y="0.500" width="10.500" height="6" fill="#e8e8e8"/><rect x="0" y="2.500" width="1.200" height="2" fill="#e8e8e8"/><path d="M3 7 L4 5 L5 7 M7 7 L8 5 L9 7" stroke="#333" stroke-width="0.500" fill="none"/></svg>
<svg style="left:864px;top:520px;" width="12" height="13" viewBox="0 0 12 13"><path d="M7 2 C9 0 12 2.500 10 4.500 L7.500 7 M5 11 C3 13 0 10.500 2 8.500 L4.500 6 M4 9 L8 4" fill="none" stroke="#d8d8d8" stroke-width="1.300"/></svg>
<div style="left:883px;top:516px;font-size:7.4px;color:#f0f0f0;white-space:nowrap;line-height:10px;width:42px;text-align:center;">14:07</div>
<div style="left:881px;top:527px;font-size:7.3px;color:#f0f0f0;white-space:nowrap;line-height:10px;width:46px;text-align:center;">16/03/2023</div>
<svg style="left:933px;top:521px;" width="14" height="13" viewBox="0 0 14 13"><path d="M1 1 H11 V8.500 H5 L2.500 11 V8.500 H1 Z" fill="#f4f4f4"/><path d="M3 3.500 H9 M3 5.800 H9" stroke="#555" stroke-width="0.600"/></svg>
<svg style="left:938px;top:527px;" width="10" height="10" viewBox="0 0 10 10"><circle cx="5" cy="5" r="4.300" fill="#2a2826" stroke="#e8e8e8" stroke-width="0.800"/><text x="5" y="7.500" font-size="6.500" font-family="Liberation Sans, sans-serif" fill="#fff" text-anchor="middle">1</text></svg>
</div></body></html>
